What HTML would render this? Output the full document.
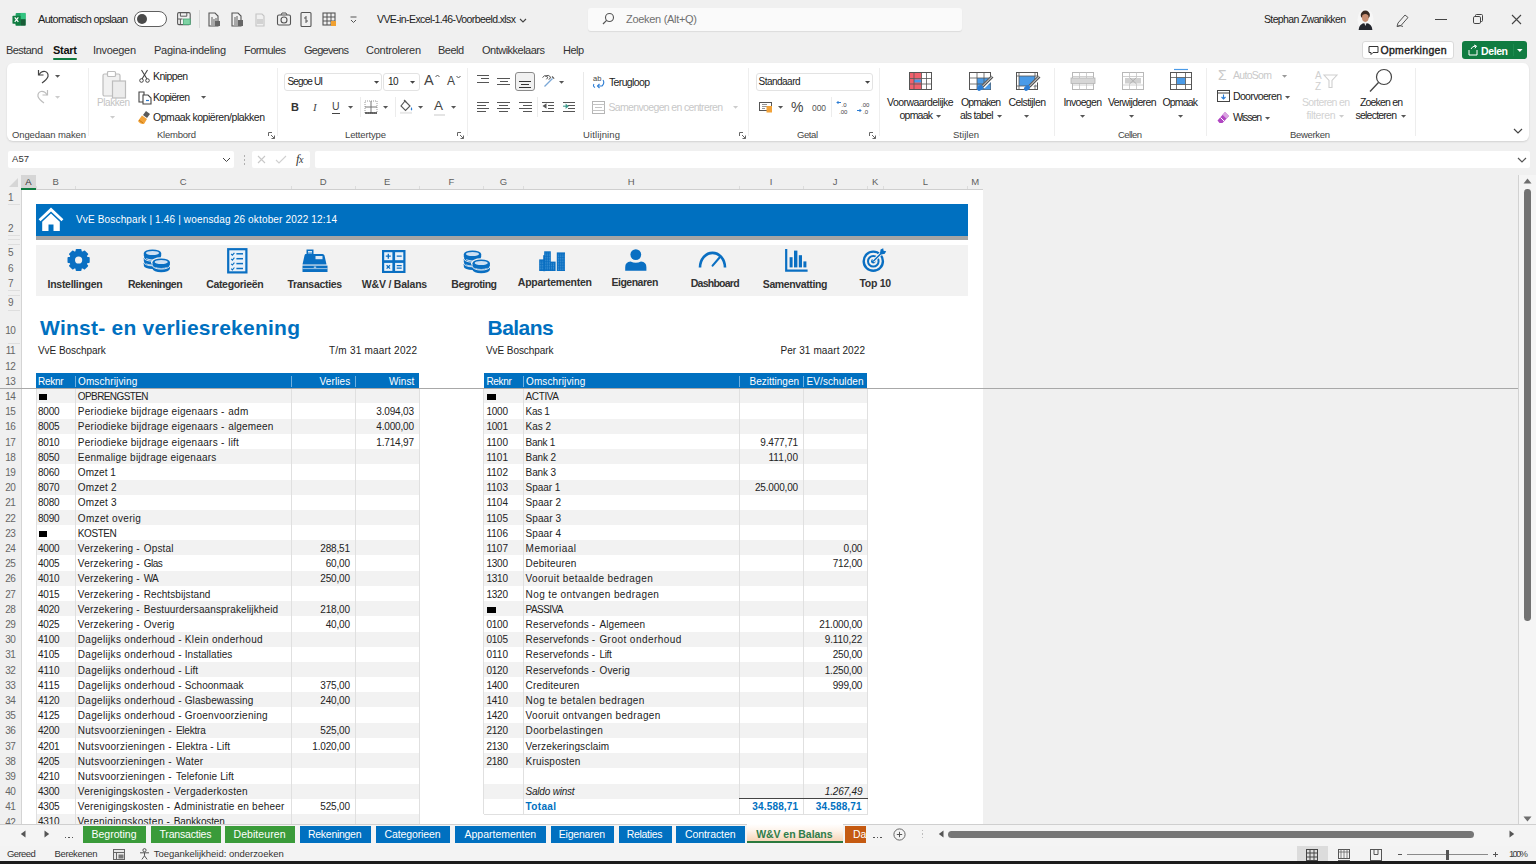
<!DOCTYPE html><html><head><meta charset="utf-8"><title>VVE-in-Excel</title><style>
*{box-sizing:border-box;margin:0;padding:0}
html,body{width:1536px;height:864px;overflow:hidden;background:#f0f0f0;font-family:"Liberation Sans",sans-serif;color:#222}
.a{position:absolute;white-space:nowrap}
.t{position:absolute;white-space:nowrap;line-height:1}
svg{position:absolute;overflow:visible}
</style></head><body>
<svg style="left:12px;top:12px;" width="14.5" height="14.5" viewBox="0 0 16 16"><rect x="4" y="1" width="11" height="14" rx="1.2" fill="#21a366"/><rect x="9.5" y="1" width="5.5" height="7" fill="#33c481"/><rect x="4" y="8" width="5.5" height="7" fill="#107c41"/><rect x="9.5" y="8" width="5.5" height="7" fill="#185c37"/><rect x="0.5" y="4" width="9" height="9" rx="1" fill="#107c41"/><path d="M3 6 L7 11 M7 6 L3 11" stroke="#fff" stroke-width="1.3"/></svg>
<div class="t" style="left:38px;top:13.56px;font-size:11px;color:#222;letter-spacing:-0.673px;">Automatisch opslaan</div>
<div class="a" style="left:133.5px;top:11px;width:33.5px;height:15.5px;border:1px solid #5f5f5f;border-radius:8px;background:#fff"></div>
<div class="a" style="left:137px;top:13.8px;width:10px;height:10px;border-radius:5px;background:#4a4a4a"></div>
<svg style="left:176.5px;top:12px;" width="14" height="13.5" viewBox="0 0 14 13.5"><rect x=".6" y=".6" width="12.6" height="12" rx="1.3" fill="none" stroke="#5a5a5a" stroke-width="1.1"/><path d="M3.4 .6 v3.6 h6.4 v-3.6" fill="none" stroke="#5a5a5a" stroke-width="1"/><path d="M.6 7 h5 M3.4 7 v5.6" stroke="#5a5a5a" stroke-width="1"/><rect x="6.4" y="7" width="6.8" height="5.6" fill="#7fd3a4" stroke="#4aa877" stroke-width=".8"/></svg>
<div class="a" style="left:199px;top:10px;width:1px;height:18px;background:#d8d8d8;"></div>
<svg style="left:206px;top:11px;" width="16" height="17" viewBox="0 0 16 17"><path d="M3 2 h6 l3 3 v10 h-9z" fill="none" stroke="#555" stroke-width="1.1"/><path d="M6 6 v8 M8 8 v6 M10 7 v7" stroke="#777" stroke-width="1.2"/><rect x="9" y="10" width="5" height="5" fill="#666"/></svg>
<svg style="left:229px;top:11px;" width="16" height="17" viewBox="0 0 16 17"><path d="M3 2 h6 l3 3 v10 h-9z" fill="none" stroke="#555" stroke-width="1.1"/><path d="M6 6 v8 M8 5 v9" stroke="#777" stroke-width="1.2"/><rect x="9" y="9" width="5" height="6" fill="#666"/></svg>
<svg style="left:252px;top:11px;" width="16" height="17" viewBox="0 0 16 17"><path d="M4 3 h6 l2 2 v10 h-8z" fill="none" stroke="#c4c4c4" stroke-width="1.1"/><rect x="5" y="8" width="6" height="5" fill="#d2d2d2"/></svg>
<svg style="left:276px;top:11px;" width="16" height="17" viewBox="0 0 16 17"><rect x="1.5" y="4" width="13" height="10" rx="1.5" fill="none" stroke="#555" stroke-width="1.1"/><circle cx="8" cy="9" r="3" fill="none" stroke="#555" stroke-width="1.1"/><path d="M5 4 l1-2 h4 l1 2" fill="none" stroke="#555" stroke-width="1"/></svg>
<svg style="left:298px;top:11px;" width="16" height="17" viewBox="0 0 16 17"><rect x="3" y="1.5" width="10" height="14" rx="1" fill="none" stroke="#555" stroke-width="1.1"/><path d="M8 5 v7 M6 7 h2 M8 10 h2" stroke="#555" stroke-width="1"/></svg>
<svg style="left:321px;top:11px;" width="16" height="17" viewBox="0 0 16 17"><rect x="2" y="2" width="12" height="12" fill="none" stroke="#555" stroke-width="1.1"/><path d="M2 6 h12 M2 10 h12 M6 2 v12 M10 2 v12" stroke="#555" stroke-width="1"/><rect x="10" y="10" width="5" height="5" fill="#f0a030"/></svg>
<svg style="left:349px;top:15px;" width="9" height="9" viewBox="0 0 9 9"><path d="M1.5 2 h6" stroke="#555" stroke-width="1"/><path d="M2 5 l2.5 2.5 l2.5-2.5" fill="none" stroke="#555" stroke-width="1"/></svg>
<div class="t" style="left:377px;top:13.83px;font-size:10.5px;color:#222;letter-spacing:-0.599px;">VVE-in-Excel-1.46-Voorbeeld.xlsx</div>
<svg style="left:519.0px;top:17.5px;" width="8" height="5" viewBox="0 0 8 5"><path d="M1 1 L4.0 4 L7 1" fill="none" stroke="#444" stroke-width="1.1"/></svg>
<div class="a" style="left:588px;top:7.5px;width:374px;height:23.3px;background:#fafafa;border-radius:3px;box-shadow:0 1px 1px #dcdcdc"></div>
<svg style="left:602px;top:12px;" width="13" height="13" viewBox="0 0 13 13"><circle cx="7.5" cy="5.5" r="4" fill="none" stroke="#555" stroke-width="1.1"/><path d="M4.6 8.4 L1 12" stroke="#555" stroke-width="1.2"/></svg>
<div class="t" style="left:626px;top:13.76px;font-size:11px;color:#707070;letter-spacing:-0.300px;">Zoeken (Alt+Q)</div>
<div class="t" style="left:1264px;top:13.83px;font-size:10.5px;color:#222;letter-spacing:-0.639px;">Stephan Zwanikken</div>
<svg style="left:1357px;top:8.5px;" width="17" height="21" viewBox="0 0 17 21"><ellipse cx="8.5" cy="10.5" rx="8" ry="10.5" fill="#f7f7f7"/><ellipse cx="8.3" cy="6" rx="4.6" ry="4.4" fill="#3a2a22"/><ellipse cx="8.3" cy="8.6" rx="3.3" ry="4.3" fill="#c98f72"/><path d="M5.4 6.2 q3-2.4 5.8 0 v-1.6 q-3-2-5.8 0z" fill="#3a2a22"/><path d="M1.6 21 q.4-6.6 6.9-7 q6.5 .4 6.9 7z" fill="#23262e"/><path d="M7 13.6 l1.4 3.4 l1.4-3.4z" fill="#e9e9e9"/></svg>
<svg style="left:1394px;top:11px;" width="17" height="17" viewBox="0 0 17 17"><path d="M4 12 l7-8 l3 2.5 l-7 8 l-4 1z" fill="none" stroke="#555" stroke-width="1"/><path d="M3 15.5 q3-2 6 0" fill="none" stroke="#555" stroke-width="1"/></svg>
<div class="a" style="left:1434.5px;top:18.6px;width:12px;height:1px;background:#444;"></div>
<svg style="left:1472px;top:13px;" width="12" height="12" viewBox="0 0 12 12"><rect x="1.5" y="3.5" width="7" height="7" rx="1.3" fill="none" stroke="#444" stroke-width="1"/><path d="M3.5 3.5 v-1 q0-1 1-1 h5 q1 0 1 1 v5 q0 1-1 1 h-1" fill="none" stroke="#444" stroke-width="1"/></svg>
<svg style="left:1511px;top:14px;" width="11" height="11" viewBox="0 0 11 11"><path d="M1 1 L10 10 M10 1 L1 10" stroke="#444" stroke-width="1.1"/></svg>
<div class="t" style="left:6px;top:45.26px;font-size:11px;color:#333;letter-spacing:-0.561px;">Bestand</div>
<div class="t" style="left:93px;top:45.26px;font-size:11px;color:#333;letter-spacing:-0.324px;">Invoegen</div>
<div class="t" style="left:154px;top:45.26px;font-size:11px;color:#333;letter-spacing:-0.274px;">Pagina-indeling</div>
<div class="t" style="left:244px;top:45.26px;font-size:11px;color:#333;letter-spacing:-0.549px;">Formules</div>
<div class="t" style="left:304px;top:45.26px;font-size:11px;color:#333;letter-spacing:-0.735px;">Gegevens</div>
<div class="t" style="left:366px;top:45.26px;font-size:11px;color:#333;letter-spacing:-0.248px;">Controleren</div>
<div class="t" style="left:438px;top:45.26px;font-size:11px;color:#333;letter-spacing:-0.534px;">Beeld</div>
<div class="t" style="left:482px;top:45.26px;font-size:11px;color:#333;letter-spacing:-0.507px;">Ontwikkelaars</div>
<div class="t" style="left:563px;top:45.26px;font-size:11px;color:#333;letter-spacing:-0.542px;">Help</div>
<div class="t" style="left:53px;top:45.26px;font-size:11px;color:#111;letter-spacing:-0.266px;font-weight:bold;">Start</div>
<div class="a" style="left:53px;top:57.5px;width:24px;height:2px;background:#107c41;border-radius:1px"></div>
<div class="a" style="left:1362.4px;top:40.6px;width:91.4px;height:18.6px;background:#fff;border:1px solid #dadada;border-radius:3px"></div>
<svg style="left:1368px;top:45px;" width="11" height="11" viewBox="0 0 11 11"><path d="M1 1.5 h9 v6 h-5 l-2 2 v-2 h-2z" fill="none" stroke="#333" stroke-width="1"/></svg>
<div class="t" style="left:1380.5px;top:45.33px;font-size:10.5px;color:#222;letter-spacing:0.297px;-webkit-text-stroke:.4px #222;">Opmerkingen</div>
<div class="a" style="left:1462px;top:40.6px;width:64.6px;height:18.8px;background:#107c41;border-radius:3px"></div>
<svg style="left:1468px;top:45px;" width="11" height="11" viewBox="0 0 11 11"><path d="M1 5 v5 h8 v-5" fill="none" stroke="#fff" stroke-width="1"/><path d="M3 4 q1-3 5-3 M6 0 l2.5 1 l-1.5 2.3" fill="none" stroke="#fff" stroke-width="1"/></svg>
<div class="t" style="left:1481px;top:45.53px;font-size:10.5px;color:#fff;letter-spacing:-0.398px;font-weight:bold;">Delen</div>
<div class="a" style="left:1513px;top:44px;width:1px;height:12px;background:#1c8a4e;"></div>
<svg style="left:1517.2px;top:49.45px;" width="5.6" height="3.1" viewBox="0 0 5.6 3.1"><path d="M0 0 h5.6 L2.8 3.1z" fill="#fff"/></svg>
<div class="a" style="left:7px;top:62.6px;width:1521.5px;height:78.4px;background:#fff;border-radius:6px;box-shadow:0 1px 2px rgba(0,0,0,.13)"></div>
<div class="a" style="left:88px;top:68px;width:1px;height:68px;background:#eeeeee;"></div>
<div class="a" style="left:277px;top:68px;width:1px;height:68px;background:#eeeeee;"></div>
<div class="a" style="left:467px;top:68px;width:1px;height:68px;background:#eeeeee;"></div>
<div class="a" style="left:748px;top:68px;width:1px;height:68px;background:#eeeeee;"></div>
<div class="a" style="left:879px;top:68px;width:1px;height:68px;background:#eeeeee;"></div>
<div class="a" style="left:1054px;top:68px;width:1px;height:68px;background:#eeeeee;"></div>
<div class="a" style="left:1206px;top:68px;width:1px;height:68px;background:#eeeeee;"></div>
<div class="t" style="left:12px;top:129.97px;font-size:9.5px;color:#444;letter-spacing:-0.117px;">Ongedaan maken</div>
<div class="t" style="left:157px;top:129.97px;font-size:9.5px;color:#444;letter-spacing:-0.237px;">Klembord</div>
<div class="t" style="left:345px;top:129.97px;font-size:9.5px;color:#444;letter-spacing:-0.139px;">Lettertype</div>
<div class="t" style="left:583px;top:129.97px;font-size:9.5px;color:#444;letter-spacing:0.122px;">Uitlijning</div>
<div class="t" style="left:797px;top:129.97px;font-size:9.5px;color:#444;letter-spacing:-0.427px;">Getal</div>
<div class="t" style="left:953px;top:129.97px;font-size:9.5px;color:#444;letter-spacing:0.021px;">Stijlen</div>
<div class="t" style="left:1118px;top:129.97px;font-size:9.5px;color:#444;letter-spacing:-0.586px;">Cellen</div>
<div class="t" style="left:1290px;top:129.97px;font-size:9.5px;color:#444;letter-spacing:-0.321px;">Bewerken</div>
<svg style="left:268px;top:132.1px;" width="7" height="7" viewBox="0 0 7 7"><path d="M0.5 4 v-3.5 h3.5" fill="none" stroke="#666" stroke-width="1"/><path d="M3 3 l3.5 3.5 M6.5 3.5 v3 h-3" fill="none" stroke="#666" stroke-width="1"/></svg>
<svg style="left:457px;top:132.1px;" width="7" height="7" viewBox="0 0 7 7"><path d="M0.5 4 v-3.5 h3.5" fill="none" stroke="#666" stroke-width="1"/><path d="M3 3 l3.5 3.5 M6.5 3.5 v3 h-3" fill="none" stroke="#666" stroke-width="1"/></svg>
<svg style="left:739px;top:132.1px;" width="7" height="7" viewBox="0 0 7 7"><path d="M0.5 4 v-3.5 h3.5" fill="none" stroke="#666" stroke-width="1"/><path d="M3 3 l3.5 3.5 M6.5 3.5 v3 h-3" fill="none" stroke="#666" stroke-width="1"/></svg>
<svg style="left:869px;top:132.1px;" width="7" height="7" viewBox="0 0 7 7"><path d="M0.5 4 v-3.5 h3.5" fill="none" stroke="#666" stroke-width="1"/><path d="M3 3 l3.5 3.5 M6.5 3.5 v3 h-3" fill="none" stroke="#666" stroke-width="1"/></svg>
<svg style="left:1513px;top:128px;" width="10" height="7" viewBox="0 0 10 7"><path d="M1 1 l4 4 l4-4" fill="none" stroke="#444" stroke-width="1.2"/></svg>
<svg style="left:35px;top:68px;" width="16" height="16" viewBox="0 0 16 16"><path d="M3.5 2 v5 h5" fill="none" stroke="#444" stroke-width="1.2"/><path d="M4 7 q2-4 6-3.5 q3.5 1 3 5 q-1 3-6 6.5" fill="none" stroke="#444" stroke-width="1.2"/></svg>
<svg style="left:54.95px;top:74.6px;" width="5.1" height="2.8000000000000003" viewBox="0 0 5.1 2.8000000000000003"><path d="M0 0 h5.1 L2.55 2.8000000000000003z" fill="#555"/></svg>
<svg style="left:35px;top:88px;" width="16" height="16" viewBox="0 0 16 16"><path d="M12.5 2 v5 h-5" fill="none" stroke="#bdbdbd" stroke-width="1.2"/><path d="M12 7 q-2-4-6-3.5 q-3.5 1-3 5 q1 3 6 6.5" fill="none" stroke="#bdbdbd" stroke-width="1.2"/></svg>
<svg style="left:54.95px;top:95.6px;" width="5.1" height="2.8000000000000003" viewBox="0 0 5.1 2.8000000000000003"><path d="M0 0 h5.1 L2.55 2.8000000000000003z" fill="#ccc"/></svg>
<svg style="left:101px;top:70px;" width="26" height="30" viewBox="0 0 26 30"><rect x="2" y="4" width="17" height="22" rx="1.5" fill="#f1f1f1" stroke="#bdbdbd" stroke-width="1.2"/><rect x="6.5" y="1.5" width="8" height="5" rx="1" fill="#fff" stroke="#bdbdbd" stroke-width="1.2"/><rect x="11.5" y="11" width="13" height="17" fill="#ececec" stroke="#bdbdbd" stroke-width="1.2"/></svg>
<div class="t" style="left:97px;top:98.10px;font-size:10px;color:#c4c4c4;letter-spacing:-0.429px;">Plakken</div>
<svg style="left:110.45px;top:115.6px;" width="5.1" height="2.8000000000000003" viewBox="0 0 5.1 2.8000000000000003"><path d="M0 0 h5.1 L2.55 2.8000000000000003z" fill="#ccc"/></svg>
<svg style="left:138px;top:69px;" width="13" height="14" viewBox="0 0 13 14"><path d="M3.5 1 L9 10 M9.5 1 L4 10" stroke="#444" stroke-width="1.1"/><circle cx="3.5" cy="11.5" r="1.8" fill="none" stroke="#444" stroke-width="1"/><circle cx="9.5" cy="11.5" r="1.8" fill="none" stroke="#444" stroke-width="1"/></svg>
<div class="t" style="left:153px;top:70.83px;font-size:10.5px;color:#222;letter-spacing:-0.589px;">Knippen</div>
<svg style="left:137px;top:90px;" width="15" height="15" viewBox="0 0 15 15"><path d="M2 2 h5 v10 h-5z" fill="#fff" stroke="#444" stroke-width="1.1"/><path d="M6 5 h5 l3 3 v6 h-8z" fill="#fff" stroke="#444" stroke-width="1.1"/><path d="M9 10.5 h3" stroke="#2b7cd3" stroke-width="1.2"/></svg>
<div class="t" style="left:153px;top:91.83px;font-size:10.5px;color:#222;letter-spacing:-0.719px;">Kopiëren</div>
<svg style="left:200.95px;top:96.1px;" width="5.1" height="2.8000000000000003" viewBox="0 0 5.1 2.8000000000000003"><path d="M0 0 h5.1 L2.55 2.8000000000000003z" fill="#555"/></svg>
<svg style="left:137px;top:110px;" width="15" height="15" viewBox="0 0 15 15"><path d="M9 1 l4 3 l-3 4 l-4-3z" fill="#5a5a5a"/><path d="M5 5.5 l5 3.5 l-3 5 q-4 .5-6-3 z" fill="#f2a33a"/><path d="M2 10 l4 3" stroke="#c77a10" stroke-width="1"/></svg>
<div class="t" style="left:153px;top:111.83px;font-size:10.5px;color:#222;letter-spacing:-0.454px;">Opmaak kopiëren/plakken</div>
<div class="a" style="left:284px;top:72.5px;width:98px;height:18px;background:#fff;border:1px solid #e3e3e3;border-radius:3px"></div>
<div class="a" style="left:383px;top:72.5px;width:36.5px;height:18px;background:#fff;border:1px solid #e3e3e3;border-radius:3px"></div>
<div class="t" style="left:287.5px;top:76.80px;font-size:10px;color:#222;letter-spacing:-0.885px;">Segoe UI</div>
<svg style="left:374.45px;top:80.6px;" width="5.1" height="2.8000000000000003" viewBox="0 0 5.1 2.8000000000000003"><path d="M0 0 h5.1 L2.55 2.8000000000000003z" fill="#444"/></svg>
<div class="t" style="left:388px;top:76.80px;font-size:10px;color:#222;letter-spacing:-0.623px;">10</div>
<svg style="left:410.45px;top:80.6px;" width="5.1" height="2.8000000000000003" viewBox="0 0 5.1 2.8000000000000003"><path d="M0 0 h5.1 L2.55 2.8000000000000003z" fill="#444"/></svg>
<div class="t" style="left:424px;top:72.67px;font-size:14.5px;color:#444;letter-spacing:0.828px;">A</div>
<svg style="left:435px;top:74px;" width="5" height="4" viewBox="0 0 5 4"><path d="M.5 3 l2-2 l2 2" fill="none" stroke="#444" stroke-width=".9"/></svg>
<div class="t" style="left:447px;top:74.52px;font-size:12px;color:#444;letter-spacing:0.496px;">A</div>
<svg style="left:456px;top:74.5px;" width="5" height="4" viewBox="0 0 5 4"><path d="M.5 1 l2 2 l2-2" fill="none" stroke="#444" stroke-width=".9"/></svg>
<div class="t" style="left:291px;top:101.66px;font-size:11px;color:#333;letter-spacing:-0.944px;font-weight:bold;">B</div>
<div class="t" style="left:313px;top:101.66px;font-size:11px;color:#444;letter-spacing:0.443px;font-style:italic;font-family:'Liberation Serif',serif;">I</div>
<div class="t" style="left:332px;top:101.43px;font-size:10.5px;color:#444;letter-spacing:-0.583px;">U</div>
<div class="a" style="left:331.5px;top:112.5px;width:8px;height:1px;background:#444;"></div>
<svg style="left:347.95px;top:106.1px;" width="5.1" height="2.8000000000000003" viewBox="0 0 5.1 2.8000000000000003"><path d="M0 0 h5.1 L2.55 2.8000000000000003z" fill="#555"/></svg>
<div class="a" style="left:359.5px;top:97px;width:1px;height:20px;background:#ececec;"></div>
<svg style="left:364px;top:100px;" width="14" height="14" viewBox="0 0 14 14"><rect x="1" y="1" width="12" height="12" fill="none" stroke="#9a9a9a" stroke-width="1" stroke-dasharray="1 1"/><path d="M7 1 v12 M1 7 h12" stroke="#777" stroke-width="1"/><path d="M1 13 h12" stroke="#333" stroke-width="1.4"/></svg>
<svg style="left:383.45px;top:106.1px;" width="5.1" height="2.8000000000000003" viewBox="0 0 5.1 2.8000000000000003"><path d="M0 0 h5.1 L2.55 2.8000000000000003z" fill="#555"/></svg>
<div class="a" style="left:394.5px;top:97px;width:1px;height:20px;background:#ececec;"></div>
<svg style="left:399px;top:99px;" width="15" height="15" viewBox="0 0 15 15"><path d="M6 2 l5 5 l-4.5 4.5 l-4.5-4.5z" fill="none" stroke="#555" stroke-width="1.1"/><path d="M5 1 l2 2" stroke="#555" stroke-width="1.1"/><path d="M12.5 8 q1.5 2.5 0 3.5 q-1.5-1 0-3.5z" fill="#2b7cd3"/><rect x="1" y="12.8" width="12" height="2" fill="#e8e8e8"/></svg>
<svg style="left:418.45px;top:106.1px;" width="5.1" height="2.8000000000000003" viewBox="0 0 5.1 2.8000000000000003"><path d="M0 0 h5.1 L2.55 2.8000000000000003z" fill="#555"/></svg>
<div class="t" style="left:434px;top:98.81px;font-size:13.5px;color:#444;letter-spacing:1.495px;">A</div>
<div class="a" style="left:434px;top:113.5px;width:11px;height:2px;background:#e4e4e4;"></div>
<svg style="left:451.45px;top:106.1px;" width="5.1" height="2.8000000000000003" viewBox="0 0 5.1 2.8000000000000003"><path d="M0 0 h5.1 L2.55 2.8000000000000003z" fill="#555"/></svg>
<div class="a" style="left:476.5px;top:75px;width:12px;height:1px;background:#555;"></div>
<div class="a" style="left:480.5px;top:78.3px;width:8px;height:1px;background:#555;"></div>
<div class="a" style="left:476.5px;top:81.6px;width:12px;height:1px;background:#555;"></div>
<div class="a" style="left:497.0px;top:77.5px;width:13px;height:1px;background:#555;"></div>
<div class="a" style="left:499.5px;top:80.8px;width:8px;height:1px;background:#555;"></div>
<div class="a" style="left:497.0px;top:84.1px;width:13px;height:1px;background:#555;"></div>
<div class="a" style="left:515.2px;top:72.2px;width:19.6px;height:19px;background:#f1f1f1;border:1px solid #8a8a8a;border-radius:3px"></div>
<div class="a" style="left:519.0px;top:81px;width:12px;height:1px;background:#333;"></div>
<div class="a" style="left:521.0px;top:84.2px;width:8px;height:1px;background:#333;"></div>
<div class="a" style="left:519.0px;top:87.4px;width:12px;height:1px;background:#333;"></div>
<svg style="left:541px;top:74px;" width="15" height="14" viewBox="0 0 15 14"><path d="M3.5 12.5 L11.5 4.5" stroke="#7aa7d6" stroke-width="1.2"/><path d="M1.5 3.5 q2-3 4.5-1.2 q1.5 1.6-.6 3 M4.2 2.2 q3.4-2 5.2.6 q.6 1.8-1.8 2.6" fill="none" stroke="#555" stroke-width="1"/><path d="M11 2.5 l2.2 2.2" stroke="#555" stroke-width="1.1"/></svg>
<svg style="left:558.95px;top:80.6px;" width="5.1" height="2.8000000000000003" viewBox="0 0 5.1 2.8000000000000003"><path d="M0 0 h5.1 L2.55 2.8000000000000003z" fill="#555"/></svg>
<div class="a" style="left:476.5px;top:101.6px;width:12px;height:1px;background:#555;"></div>
<div class="a" style="left:476.5px;top:104.8px;width:9px;height:1px;background:#555;"></div>
<div class="a" style="left:476.5px;top:108px;width:12px;height:1px;background:#555;"></div>
<div class="a" style="left:476.5px;top:111.2px;width:9px;height:1px;background:#555;"></div>
<div class="a" style="left:497.0px;top:101.6px;width:13px;height:1px;background:#555;"></div>
<div class="a" style="left:499.0px;top:104.8px;width:9px;height:1px;background:#555;"></div>
<div class="a" style="left:497.0px;top:108px;width:13px;height:1px;background:#555;"></div>
<div class="a" style="left:499.0px;top:111.2px;width:9px;height:1px;background:#555;"></div>
<div class="a" style="left:518.5px;top:101.6px;width:13px;height:1px;background:#555;"></div>
<div class="a" style="left:522.5px;top:104.8px;width:9px;height:1px;background:#555;"></div>
<div class="a" style="left:518.5px;top:108px;width:13px;height:1px;background:#555;"></div>
<div class="a" style="left:522.5px;top:111.2px;width:9px;height:1px;background:#555;"></div>
<div class="a" style="left:536.5px;top:97px;width:1px;height:20px;background:#ececec;"></div>
<div class="a" style="left:542px;top:101.6px;width:12px;height:1px;background:#555;"></div>
<div class="a" style="left:542px;top:111.2px;width:12px;height:1px;background:#555;"></div>
<div class="a" style="left:547.5px;top:104.8px;width:6.5px;height:1px;background:#555;"></div>
<div class="a" style="left:547.5px;top:108px;width:6.5px;height:1px;background:#555;"></div>
<svg style="left:542px;top:103.4px;" width="5" height="6" viewBox="0 0 5 6"><path d="M4.5 0.3 L0.5 3 L4.5 5.7z" fill="#555"/></svg>
<div class="a" style="left:562.7px;top:101.6px;width:12px;height:1px;background:#555;"></div>
<div class="a" style="left:562.7px;top:111.2px;width:12px;height:1px;background:#555;"></div>
<div class="a" style="left:568.2px;top:104.8px;width:6.5px;height:1px;background:#555;"></div>
<div class="a" style="left:568.2px;top:108px;width:6.5px;height:1px;background:#555;"></div>
<svg style="left:562.5px;top:103.2px;" width="6" height="6.4" viewBox="0 0 6 6.4"><path d="M0 3.2 h3" stroke="#3f9a8c" stroke-width="1.1"/><path d="M2.6 0.4 L5.8 3.2 L2.6 6z" fill="#3f9a8c"/></svg>
<div class="a" style="left:583.3px;top:72px;width:1px;height:48px;background:#e9e9e9;"></div>
<svg style="left:592px;top:74px;" width="13" height="15" viewBox="0 0 13 15"><text x="1" y="7" font-size="7.5" fill="#444" font-family="Liberation Sans">ab</text><path d="M2 10 q-1.5 2 1 3.5 M11 6 q2 3-1 6 h-4" fill="none" stroke="#2b7cd3" stroke-width="1.1"/><path d="M7.5 10 l-2 2 l2 2" fill="none" stroke="#2b7cd3" stroke-width="1.1"/></svg>
<div class="t" style="left:609px;top:76.93px;font-size:10.5px;color:#222;letter-spacing:-0.640px;">Terugloop</div>
<svg style="left:591.5px;top:100.5px;" width="13" height="13" viewBox="0 0 13 13"><rect x=".5" y=".5" width="12" height="12" fill="none" stroke="#b5b5b5" stroke-width="1"/><path d="M.5 3.5 h12 M.5 9.5 h12" stroke="#c4c4c4" stroke-width="1"/><path d="M3 6.5 h7" stroke="#c4c4c4" stroke-width="1"/></svg>
<div class="t" style="left:608.5px;top:102.43px;font-size:10.5px;color:#c8c8c8;letter-spacing:-0.656px;">Samenvoegen en centreren</div>
<svg style="left:732.95px;top:106.1px;" width="5.1" height="2.8000000000000003" viewBox="0 0 5.1 2.8000000000000003"><path d="M0 0 h5.1 L2.55 2.8000000000000003z" fill="#ccc"/></svg>
<div class="a" style="left:755.5px;top:72.5px;width:117.5px;height:18px;background:#fff;border:1px solid #e3e3e3;border-radius:3px"></div>
<div class="t" style="left:758.5px;top:76.80px;font-size:10px;color:#222;letter-spacing:-0.518px;">Standaard</div>
<svg style="left:864.95px;top:80.6px;" width="5.1" height="2.8000000000000003" viewBox="0 0 5.1 2.8000000000000003"><path d="M0 0 h5.1 L2.55 2.8000000000000003z" fill="#444"/></svg>
<svg style="left:759px;top:101px;" width="13" height="12" viewBox="0 0 13 12"><rect x=".5" y="1.5" width="12" height="8" fill="#fff" stroke="#555" stroke-width="1"/><path d="M3 3.5 h5 M3 5.5 h5 M3 7.5 h3" stroke="#777" stroke-width=".8"/><rect x="7.5" y="5" width="5.5" height="6.5" fill="#f2a33a"/></svg>
<svg style="left:778.45px;top:106.1px;" width="5.1" height="2.8000000000000003" viewBox="0 0 5.1 2.8000000000000003"><path d="M0 0 h5.1 L2.55 2.8000000000000003z" fill="#555"/></svg>
<div class="t" style="left:791px;top:99.54px;font-size:14px;color:#444;letter-spacing:1.552px;">%</div>
<div class="t" style="left:812px;top:103.51px;font-size:8.5px;color:#555;letter-spacing:-0.091px;">000</div>
<div class="a" style="left:831px;top:97px;width:1px;height:20px;background:#ececec;"></div>
<svg style="left:836px;top:100px;" width="14" height="14" viewBox="0 0 14 14"><path d="M5 2.5 h-4 M2.5 1 l-1.5 1.5 l1.5 1.5" fill="none" stroke="#2b7cd3" stroke-width="1"/><text x="5.5" y="6.5" font-size="6" fill="#444" font-family="Liberation Sans">.0</text><text x="3" y="13.5" font-size="6" fill="#444" font-family="Liberation Sans">.00</text></svg>
<svg style="left:856px;top:100px;" width="14" height="14" viewBox="0 0 14 14"><text x="5" y="6.5" font-size="6" fill="#444" font-family="Liberation Sans">.00</text><path d="M1 10.5 h4 M3.5 9 l1.5 1.5 l-1.5 1.5" fill="none" stroke="#2b7cd3" stroke-width="1"/><text x="7" y="13.5" font-size="6" fill="#444" font-family="Liberation Sans">.0</text></svg>
<svg style="left:909px;top:72px;" width="23" height="18" viewBox="0 0 23 18"><rect x=".5" y=".5" width="22" height="17" fill="#fff" stroke="#555" stroke-width="1"/><rect x="5" y="1" width="7.5" height="5.5" fill="#f0616d"/><rect x="5" y="12" width="7.5" height="5" fill="#f0616d"/><rect x="1" y="6.5" width="11.5" height="5.5" fill="#f0616d"/><rect x="1" y="1" width="4" height="16" fill="#f0616d"/><rect x="5" y="7.5" width="7.5" height="3" fill="#4a9be8"/><path d="M5 .5 v17 M12.5 .5 v17 M17.5 .5 v17 M.5 6.5 h22 M.5 12 h22" stroke="#555" stroke-width=".8"/></svg>
<div class="t" style="left:887px;top:96.83px;font-size:10.5px;color:#222;letter-spacing:-0.545px;">Voorwaardelijke</div>
<div class="t" style="left:899.5px;top:109.53px;font-size:10.5px;color:#222;letter-spacing:-0.771px;">opmaak</div>
<svg style="left:936.45px;top:114.6px;" width="5.1" height="2.8000000000000003" viewBox="0 0 5.1 2.8000000000000003"><path d="M0 0 h5.1 L2.55 2.8000000000000003z" fill="#555"/></svg>
<svg style="left:969px;top:72px;" width="25" height="19" viewBox="0 0 25 19"><rect x=".5" y=".5" width="21" height="17" fill="#fff" stroke="#555" stroke-width="1"/><rect x="8" y="6" width="13.5" height="11.5" fill="#4a9be8"/><path d="M8 .5 v17 M15 .5 v17 M.5 6 h21 M.5 12 h21" stroke="#555" stroke-width=".8"/><path d="M24 5 L14 15" stroke="#fff" stroke-width="4"/><path d="M24 5 L14 15" stroke="#555" stroke-width="1.2"/><path d="M22.5 3.8 L12.5 13.8" stroke="#555" stroke-width="1.2"/><ellipse cx="11" cy="16" rx="3.3" ry="2.4" fill="#2b7cd3" transform="rotate(-40 11 16)"/></svg>
<div class="t" style="left:961px;top:96.83px;font-size:10.5px;color:#222;letter-spacing:-0.921px;">Opmaken</div>
<div class="t" style="left:960px;top:109.53px;font-size:10.5px;color:#222;letter-spacing:-0.701px;">als tabel</div>
<svg style="left:996.95px;top:114.6px;" width="5.1" height="2.8000000000000003" viewBox="0 0 5.1 2.8000000000000003"><path d="M0 0 h5.1 L2.55 2.8000000000000003z" fill="#555"/></svg>
<svg style="left:1015.5px;top:72px;" width="25" height="19" viewBox="0 0 25 19"><rect x=".5" y=".5" width="21" height="17" fill="#fff" stroke="#555" stroke-width="1"/><rect x="3" y="4" width="16" height="10" fill="#4a9be8"/><path d="M3 .5 v17 M19 .5 v17 M.5 4 h21 M.5 14 h21" stroke="#555" stroke-width=".8"/><path d="M24 5 L14 15" stroke="#fff" stroke-width="4"/><path d="M24 5 L14 15" stroke="#555" stroke-width="1.2"/><path d="M22.5 3.8 L12.5 13.8" stroke="#555" stroke-width="1.2"/><ellipse cx="11" cy="16" rx="3.3" ry="2.4" fill="#2b7cd3" transform="rotate(-40 11 16)"/></svg>
<div class="t" style="left:1008.5px;top:96.83px;font-size:10.5px;color:#222;letter-spacing:-0.567px;">Celstijlen</div>
<svg style="left:1024.45px;top:114.6px;" width="5.1" height="2.8000000000000003" viewBox="0 0 5.1 2.8000000000000003"><path d="M0 0 h5.1 L2.55 2.8000000000000003z" fill="#555"/></svg>
<svg style="left:1071px;top:72px;" width="24" height="18" viewBox="0 0 24 18"><rect x="1.5" y=".5" width="21" height="17" fill="#fff" stroke="#b8b8b8" stroke-width="1"/><path d="M8.5 .5 v17 M15.5 .5 v17 M1.5 4.5 h21 M1.5 13 h21" stroke="#c4c4c4" stroke-width=".8"/><rect x="0" y="6" width="24" height="5.5" fill="#d6d6d6" stroke="#b5b5b5" stroke-width=".8"/></svg>
<div class="t" style="left:1063.5px;top:97.33px;font-size:10.5px;color:#222;letter-spacing:-0.672px;">Invoegen</div>
<svg style="left:1079.95px;top:114.6px;" width="5.1" height="2.8000000000000003" viewBox="0 0 5.1 2.8000000000000003"><path d="M0 0 h5.1 L2.55 2.8000000000000003z" fill="#555"/></svg>
<svg style="left:1120.5px;top:72px;" width="24" height="18" viewBox="0 0 24 18"><rect x="1.5" y=".5" width="21" height="17" fill="#fff" stroke="#b8b8b8" stroke-width="1"/><path d="M8.5 .5 v17 M15.5 .5 v17 M1.5 4.5 h21 M1.5 13 h21" stroke="#c4c4c4" stroke-width=".8"/><rect x="4" y="6" width="16" height="5.5" fill="#d0d0d0"/><path d="M9 6 l6 5.5 M15 6 l-6 5.5" stroke="#b0b0b0" stroke-width="1"/></svg>
<div class="t" style="left:1108px;top:97.33px;font-size:10.5px;color:#222;letter-spacing:-0.637px;">Verwijderen</div>
<svg style="left:1129.45px;top:114.6px;" width="5.1" height="2.8000000000000003" viewBox="0 0 5.1 2.8000000000000003"><path d="M0 0 h5.1 L2.55 2.8000000000000003z" fill="#555"/></svg>
<svg style="left:1169px;top:68px;" width="24" height="22" viewBox="0 0 24 22"><path d="M5 1.5 h14" stroke="#4a9be8" stroke-width="1.2"/><rect x="1.5" y="4.5" width="21" height="17" fill="#fff" stroke="#555" stroke-width="1"/><rect x="7.5" y="9.5" width="9" height="7" fill="#4a9be8"/><path d="M7.5 4.5 v17 M16.5 4.5 v17 M1.5 9.5 h21 M1.5 16.5 h21" stroke="#555" stroke-width=".8"/></svg>
<div class="t" style="left:1162.5px;top:96.83px;font-size:10.5px;color:#222;letter-spacing:-0.837px;">Opmaak</div>
<svg style="left:1177.95px;top:114.6px;" width="5.1" height="2.8000000000000003" viewBox="0 0 5.1 2.8000000000000003"><path d="M0 0 h5.1 L2.55 2.8000000000000003z" fill="#555"/></svg>
<div class="t" style="left:1218px;top:67.94px;font-size:14px;color:#c9c9c9;letter-spacing:0.346px;">Σ</div>
<div class="t" style="left:1233px;top:69.83px;font-size:10.5px;color:#c9c9c9;letter-spacing:-0.699px;">AutoSom</div>
<svg style="left:1282.45px;top:74.6px;" width="5.1" height="2.8000000000000003" viewBox="0 0 5.1 2.8000000000000003"><path d="M0 0 h5.1 L2.55 2.8000000000000003z" fill="#999"/></svg>
<svg style="left:1217px;top:90px;" width="13" height="12" viewBox="0 0 13 12"><rect x=".5" y=".5" width="12" height="11" fill="#fff" stroke="#444" stroke-width="1"/><path d="M.5 3 h12" stroke="#444" stroke-width="1"/><path d="M6.5 4.5 v4.5 M4.5 7 l2 2 l2-2" fill="none" stroke="#2b7cd3" stroke-width="1.1"/></svg>
<div class="t" style="left:1233px;top:90.83px;font-size:10.5px;color:#222;letter-spacing:-0.652px;">Doorvoeren</div>
<svg style="left:1285.45px;top:95.6px;" width="5.1" height="2.8000000000000003" viewBox="0 0 5.1 2.8000000000000003"><path d="M0 0 h5.1 L2.55 2.8000000000000003z" fill="#555"/></svg>
<svg style="left:1217px;top:111px;" width="13" height="13" viewBox="0 0 13 13"><path d="M8 1 l4 4 l-6.5 7 h-3 l-2-2.5z" fill="#b146c2"/><path d="M3.5 6.5 l4 4" stroke="#fff" stroke-width="1"/><path d="M8 1 l4 4 l-2.5 2.8 l-4-4z" fill="#d9a3e0"/></svg>
<div class="t" style="left:1233px;top:112.33px;font-size:10.5px;color:#222;letter-spacing:-1.085px;">Wissen</div>
<svg style="left:1265.45px;top:117.1px;" width="5.1" height="2.8000000000000003" viewBox="0 0 5.1 2.8000000000000003"><path d="M0 0 h5.1 L2.55 2.8000000000000003z" fill="#555"/></svg>
<svg style="left:1314px;top:70px;" width="24" height="22" viewBox="0 0 24 22"><text x="1" y="9" font-size="10" fill="#cfcfcf" font-family="Liberation Sans">A</text><text x="1" y="20" font-size="10" fill="#cfcfcf" font-family="Liberation Sans">Z</text><path d="M10 5 h13 l-5 5.5 v7 h-3 v-7z" fill="none" stroke="#cfcfcf" stroke-width="1.1"/></svg>
<div class="t" style="left:1302px;top:96.83px;font-size:10.5px;color:#d2d2d2;letter-spacing:-0.687px;">Sorteren en</div>
<div class="t" style="left:1306.5px;top:109.53px;font-size:10.5px;color:#d2d2d2;letter-spacing:-0.360px;">filteren</div>
<svg style="left:1338.95px;top:114.6px;" width="5.1" height="2.8000000000000003" viewBox="0 0 5.1 2.8000000000000003"><path d="M0 0 h5.1 L2.55 2.8000000000000003z" fill="#ccc"/></svg>
<svg style="left:1368px;top:68px;" width="26" height="26" viewBox="0 0 26 26"><circle cx="16" cy="9" r="7.5" fill="none" stroke="#444" stroke-width="1.2"/><path d="M10.5 14.5 L2 23.5" stroke="#444" stroke-width="1.3"/></svg>
<div class="t" style="left:1360px;top:96.83px;font-size:10.5px;color:#222;letter-spacing:-0.828px;">Zoeken en</div>
<div class="t" style="left:1355.5px;top:109.53px;font-size:10.5px;color:#222;letter-spacing:-0.772px;">selecteren</div>
<svg style="left:1400.95px;top:114.6px;" width="5.1" height="2.8000000000000003" viewBox="0 0 5.1 2.8000000000000003"><path d="M0 0 h5.1 L2.55 2.8000000000000003z" fill="#555"/></svg>
<div class="a" style="left:1415px;top:68px;width:1px;height:68px;background:#ededed;"></div>
<div class="a" style="left:7.5px;top:150.5px;width:226px;height:17.5px;background:#fff;border-radius:2px"></div>
<div class="t" style="left:12px;top:154.37px;font-size:9.5px;color:#333;letter-spacing:0.048px;">A57</div>
<svg style="left:222px;top:157px;" width="9" height="6" viewBox="0 0 9 6"><path d="M1 1 l3.5 3.5 l3.5-3.5" fill="none" stroke="#444" stroke-width="1"/></svg>
<div class="a" style="left:243.5px;top:155px;width:1px;height:1.5px;background:#b0b0b0;"></div>
<div class="a" style="left:243.5px;top:159px;width:1px;height:1.5px;background:#b0b0b0;"></div>
<div class="a" style="left:243.5px;top:163px;width:1px;height:1.5px;background:#b0b0b0;"></div>
<div class="a" style="left:251.5px;top:150.5px;width:58px;height:17.5px;background:#fff;border-radius:2px"></div>
<svg style="left:257px;top:155px;" width="9" height="9" viewBox="0 0 9 9"><path d="M1 1 L8 8 M8 1 L1 8" stroke="#c8c8c8" stroke-width="1.1"/></svg>
<svg style="left:275px;top:155px;" width="12" height="9" viewBox="0 0 12 9"><path d="M1 5 l3 3 l7-7" fill="none" stroke="#d0d0d0" stroke-width="1.1"/></svg>
<div class="t" style="left:296px;top:152.5px;font-size:12.5px;font-style:italic;font-family:'Liberation Serif',serif;color:#333;letter-spacing:-.5px">f<span style="font-size:10px">x</span></div>
<div class="a" style="left:314.5px;top:150.5px;width:1215.5px;height:17.5px;background:#fff;border-radius:2px"></div>
<svg style="left:1517px;top:156.5px;" width="10" height="7" viewBox="0 0 10 7"><path d="M1 1 l4 4 l4-4" fill="none" stroke="#555" stroke-width="1.2"/></svg>
<div class="a" style="left:21.0px;top:189.5px;width:961.5px;height:635.0px;background:#fff;"></div>
<div class="a" style="left:0px;top:174.5px;width:1520px;height:15.0px;background:#f0f0f0;"></div>
<div class="a" style="left:21.0px;top:188.5px;width:961.5px;height:1px;background:#cfcfcf;"></div>
<svg style="left:8px;top:178px;" width="11" height="10" viewBox="0 0 11 10"><path d="M10 0 v9 h-9z" fill="#d6d6d6"/></svg>
<div class="a" style="left:20.7px;top:174.5px;width:15.3px;height:15.0px;background:#d6d6d6;"></div>
<div class="a" style="left:20.7px;top:187.5px;width:15.3px;height:2px;background:#107c41;"></div>
<div class="t" style="left:25.3399658203125px;top:177.47px;font-size:9.5px;color:#333;letter-spacing:-0.317px;">A</div>
<div class="a" style="left:35.5px;top:185.5px;width:1px;height:3px;background:#dcdcdc;"></div>
<div class="t" style="left:52.4899658203125px;top:177.47px;font-size:9.5px;color:#5e5e5e;letter-spacing:-0.317px;">B</div>
<div class="a" style="left:74.5px;top:185.5px;width:1px;height:3px;background:#dcdcdc;"></div>
<div class="t" style="left:179.7413330078125px;top:177.47px;font-size:9.5px;color:#5e5e5e;letter-spacing:-0.343px;">C</div>
<div class="a" style="left:290.5px;top:185.5px;width:1px;height:3px;background:#dcdcdc;"></div>
<div class="t" style="left:319.7413330078125px;top:177.47px;font-size:9.5px;color:#5e5e5e;letter-spacing:-0.343px;">D</div>
<div class="a" style="left:354.5px;top:185.5px;width:1px;height:3px;background:#dcdcdc;"></div>
<div class="t" style="left:383.9899658203125px;top:177.47px;font-size:9.5px;color:#5e5e5e;letter-spacing:-0.317px;">E</div>
<div class="a" style="left:418.5px;top:185.5px;width:1px;height:3px;background:#dcdcdc;"></div>
<div class="t" style="left:448.543701171875px;top:177.47px;font-size:9.5px;color:#5e5e5e;letter-spacing:-0.290px;">F</div>
<div class="a" style="left:483.1px;top:185.5px;width:1px;height:3px;background:#dcdcdc;"></div>
<div class="t" style="left:499.7899169921875px;top:177.47px;font-size:9.5px;color:#5e5e5e;letter-spacing:-0.369px;">G</div>
<div class="a" style="left:522.5px;top:185.5px;width:1px;height:3px;background:#dcdcdc;"></div>
<div class="t" style="left:627.7413330078125px;top:177.47px;font-size:9.5px;color:#5e5e5e;letter-spacing:-0.343px;">H</div>
<div class="a" style="left:738.5px;top:185.5px;width:1px;height:3px;background:#dcdcdc;"></div>
<div class="t" style="left:769.7461669921875px;top:177.47px;font-size:9.5px;color:#5e5e5e;letter-spacing:-0.132px;">I</div>
<div class="a" style="left:802.5px;top:185.5px;width:1px;height:3px;background:#dcdcdc;"></div>
<div class="t" style="left:832.74375px;top:177.47px;font-size:9.5px;color:#5e5e5e;letter-spacing:-0.237px;">J</div>
<div class="a" style="left:866.5px;top:185.5px;width:1px;height:3px;background:#dcdcdc;"></div>
<div class="t" style="left:871.9899658203125px;top:177.47px;font-size:9.5px;color:#5e5e5e;letter-spacing:-0.317px;">K</div>
<div class="a" style="left:882.5px;top:185.5px;width:1px;height:3px;background:#dcdcdc;"></div>
<div class="t" style="left:922.740478515625px;top:177.47px;font-size:9.5px;color:#5e5e5e;letter-spacing:-0.264px;">L</div>
<div class="a" style="left:967.0px;top:185.5px;width:1px;height:3px;background:#dcdcdc;"></div>
<div class="t" style="left:971.2408203125px;top:177.47px;font-size:9.5px;color:#5e5e5e;letter-spacing:-0.396px;">M</div>
<div class="a" style="left:0px;top:189.5px;width:21.0px;height:635.0px;background:#f0f0f0;"></div>
<div class="a" style="left:20.5px;top:189.5px;width:1px;height:635.0px;background:#d4d4d4;"></div>
<div class="t" style="left:7.9582763671875px;top:192.90px;font-size:10px;color:#666;letter-spacing:-0.278px;">1</div>
<div class="t" style="left:7.9582763671875px;top:224.40px;font-size:10px;color:#666;letter-spacing:-0.278px;">2</div>
<div class="t" style="left:7.9582763671875px;top:247.80px;font-size:10px;color:#666;letter-spacing:-0.278px;">5</div>
<div class="t" style="left:7.9582763671875px;top:263.90px;font-size:10px;color:#666;letter-spacing:-0.278px;">6</div>
<div class="t" style="left:7.9582763671875px;top:278.60px;font-size:10px;color:#666;letter-spacing:-0.278px;">7</div>
<div class="t" style="left:7.9582763671875px;top:297.90px;font-size:10px;color:#666;letter-spacing:-0.278px;">9</div>
<div class="t" style="left:5.316552734375px;top:326.20px;font-size:10px;color:#666;letter-spacing:-0.556px;">10</div>
<div class="t" style="left:5.669091796875px;top:346.40px;font-size:10px;color:#666;letter-spacing:-0.519px;">11</div>
<div class="t" style="left:5.316552734375px;top:361.60px;font-size:10px;color:#666;letter-spacing:-0.556px;">12</div>
<div class="t" style="left:5.316552734375px;top:376.60px;font-size:10px;color:#666;letter-spacing:-0.556px;">13</div>
<div class="t" style="left:5.316552734375px;top:391.90px;font-size:10px;color:#666;letter-spacing:-0.556px;">14</div>
<div class="t" style="left:5.316552734375px;top:407.10px;font-size:10px;color:#666;letter-spacing:-0.556px;">15</div>
<div class="t" style="left:5.316552734375px;top:422.30px;font-size:10px;color:#666;letter-spacing:-0.556px;">16</div>
<div class="t" style="left:5.316552734375px;top:437.50px;font-size:10px;color:#666;letter-spacing:-0.556px;">17</div>
<div class="t" style="left:5.316552734375px;top:452.70px;font-size:10px;color:#666;letter-spacing:-0.556px;">18</div>
<div class="t" style="left:5.316552734375px;top:467.90px;font-size:10px;color:#666;letter-spacing:-0.556px;">19</div>
<div class="t" style="left:5.316552734375px;top:483.10px;font-size:10px;color:#666;letter-spacing:-0.556px;">20</div>
<div class="t" style="left:5.316552734375px;top:498.30px;font-size:10px;color:#666;letter-spacing:-0.556px;">21</div>
<div class="t" style="left:5.316552734375px;top:513.50px;font-size:10px;color:#666;letter-spacing:-0.556px;">22</div>
<div class="t" style="left:5.316552734375px;top:528.70px;font-size:10px;color:#666;letter-spacing:-0.556px;">23</div>
<div class="t" style="left:5.316552734375px;top:543.90px;font-size:10px;color:#666;letter-spacing:-0.556px;">24</div>
<div class="t" style="left:5.316552734375px;top:559.10px;font-size:10px;color:#666;letter-spacing:-0.556px;">25</div>
<div class="t" style="left:5.316552734375px;top:574.30px;font-size:10px;color:#666;letter-spacing:-0.556px;">26</div>
<div class="t" style="left:5.316552734375px;top:589.50px;font-size:10px;color:#666;letter-spacing:-0.556px;">27</div>
<div class="t" style="left:5.316552734375px;top:604.70px;font-size:10px;color:#666;letter-spacing:-0.556px;">28</div>
<div class="t" style="left:5.316552734375px;top:619.90px;font-size:10px;color:#666;letter-spacing:-0.556px;">29</div>
<div class="t" style="left:5.316552734375px;top:635.10px;font-size:10px;color:#666;letter-spacing:-0.556px;">30</div>
<div class="t" style="left:5.316552734375px;top:650.30px;font-size:10px;color:#666;letter-spacing:-0.556px;">31</div>
<div class="t" style="left:5.316552734375px;top:665.50px;font-size:10px;color:#666;letter-spacing:-0.556px;">32</div>
<div class="t" style="left:5.316552734375px;top:680.70px;font-size:10px;color:#666;letter-spacing:-0.556px;">33</div>
<div class="t" style="left:5.316552734375px;top:695.90px;font-size:10px;color:#666;letter-spacing:-0.556px;">34</div>
<div class="t" style="left:5.316552734375px;top:711.10px;font-size:10px;color:#666;letter-spacing:-0.556px;">35</div>
<div class="t" style="left:5.316552734375px;top:726.30px;font-size:10px;color:#666;letter-spacing:-0.556px;">36</div>
<div class="t" style="left:5.316552734375px;top:741.50px;font-size:10px;color:#666;letter-spacing:-0.556px;">37</div>
<div class="t" style="left:5.316552734375px;top:756.70px;font-size:10px;color:#666;letter-spacing:-0.556px;">38</div>
<div class="t" style="left:5.316552734375px;top:771.90px;font-size:10px;color:#666;letter-spacing:-0.556px;">39</div>
<div class="t" style="left:5.316552734375px;top:787.10px;font-size:10px;color:#666;letter-spacing:-0.556px;">40</div>
<div class="t" style="left:5.316552734375px;top:802.30px;font-size:10px;color:#666;letter-spacing:-0.556px;">41</div>
<div class="t" style="left:5.316552734375px;top:817.50px;font-size:10px;color:#666;letter-spacing:-0.556px;">42</div>
<div class="a" style="left:8px;top:203.5px;width:12px;height:1px;background:#dedede;"></div>
<div class="a" style="left:8px;top:235.0px;width:12px;height:1px;background:#dedede;"></div>
<div class="a" style="left:8px;top:239.0px;width:12px;height:1px;background:#dedede;"></div>
<div class="a" style="left:8px;top:244.0px;width:12px;height:1px;background:#dedede;"></div>
<div class="a" style="left:8px;top:289.5px;width:12px;height:1px;background:#dedede;"></div>
<div class="a" style="left:8px;top:295.0px;width:12px;height:1px;background:#dedede;"></div>
<div class="a" style="left:8px;top:310.2px;width:12px;height:1px;background:#dedede;"></div>
<div class="a" style="left:8px;top:342.5px;width:12px;height:1px;background:#dedede;"></div>
<div class="a" style="left:36px;top:204px;width:932px;height:31.5px;background:#0070c0;"></div>
<div class="a" style="left:36px;top:235.5px;width:932px;height:4px;background:#a5a5a5;"></div>
<div class="a" style="left:36px;top:244.5px;width:932px;height:51px;background:#f2f2f2;"></div>
<svg style="left:37.8px;top:207.4px;" width="26" height="25" viewBox="0 0 26 25"><path d="M13 0.6 L0.6 12.2 l1.9 2 L13 4.6 l10.5 9.6 l1.9-2z" fill="#fff"/><path d="M13 6.6 L4.2 14.8 V24 h6.3 v-6.6 h5 v6.6 h6.3 V14.8z" fill="#fff"/></svg>
<div class="t" style="left:76px;top:214.80px;font-size:10px;color:#fff;letter-spacing:0.162px;">VvE Boschpark | 1.46 | woensdag 26 oktober 2022 12:14</div>
<svg style="left:66px;top:247px;" width="26" height="26" viewBox="0 0 26 26"><path d="M10.36 4.80 L10.57 2.80 L14.63 2.80 L14.84 4.80 L16.81 5.62 L18.38 4.35 L21.25 7.22 L19.98 8.79 L20.80 10.76 L22.80 10.97 L22.80 15.03 L20.80 15.24 L19.98 17.21 L21.25 18.78 L18.38 21.65 L16.81 20.38 L14.84 21.20 L14.63 23.20 L10.57 23.20 L10.36 21.20 L8.39 20.38 L6.82 21.65 L3.95 18.78 L5.22 17.21 L4.40 15.24 L2.40 15.03 L2.40 10.97 L4.40 10.76 L5.22 8.79 L3.95 7.22 L6.82 4.35 L8.39 5.62 Z" fill="#0a6fc2" stroke="#0a6fc2" stroke-width="1.8" stroke-linejoin="round"/><circle cx="12.6" cy="13" r="3.6" fill="#f2f2f2"/></svg>
<div class="t" style="left:47.6px;top:278.63px;font-size:10.5px;color:#333;letter-spacing:-0.295px;font-weight:bold;">Instellingen</div>
<svg style="left:143px;top:248px;" width="28" height="24" viewBox="0 0 28 24"><path d="M0.8000000000000007 15.3 v2.2 a8.7 3.6 0 0 0 17.4 0 v-2.2 z" fill="#0a6fc2"/><ellipse cx="9.5" cy="15.3" rx="8.7" ry="3.6" fill="#0a6fc2"/><ellipse cx="9.5" cy="15.3" rx="6.6" ry="2.1" fill="#cfe1f3"/><path d="M0.8 14.2 a8.7 3.6 0 0 0 17.4 0" fill="none" stroke="#f2f2f2" stroke-width=".9"/><path d="M0.8000000000000007 10.3 v2.6 a8.7 3.6 0 0 0 17.4 0 v-2.6 z" fill="#0a6fc2"/><ellipse cx="9.5" cy="10.3" rx="8.7" ry="3.6" fill="#0a6fc2"/><ellipse cx="9.5" cy="10.3" rx="6.6" ry="2.1" fill="#cfe1f3"/><path d="M0.8 9.6 a8.7 3.6 0 0 0 17.4 0" fill="none" stroke="#f2f2f2" stroke-width=".9"/><path d="M0.8000000000000007 5 v2.8 a8.7 3.6 0 0 0 17.4 0 v-2.8 z" fill="#0a6fc2"/><ellipse cx="9.5" cy="5" rx="8.7" ry="3.6" fill="#0a6fc2"/><ellipse cx="9.5" cy="5" rx="6.6" ry="2.1" fill="#cfe1f3"/><ellipse cx="18" cy="14.3" rx="10" ry="5" fill="#f2f2f2"/><path d="M9.5 18.6 v2.2 a8.7 3.5 0 0 0 17.4 0 v-2.2 z" fill="#0a6fc2"/><ellipse cx="18.2" cy="18.6" rx="8.7" ry="3.5" fill="#0a6fc2"/><ellipse cx="18.2" cy="18.6" rx="6.6" ry="2.0" fill="#cfe1f3"/><path d="M9.5 17.6 a8.7 3.5 0 0 0 17.4 0" fill="none" stroke="#f2f2f2" stroke-width=".9"/><path d="M9.5 14 v2.6 a8.7 3.5 0 0 0 17.4 0 v-2.6 z" fill="#0a6fc2"/><ellipse cx="18.2" cy="14" rx="8.7" ry="3.5" fill="#0a6fc2"/><ellipse cx="18.2" cy="14" rx="6.6" ry="2.0" fill="#cfe1f3"/></svg>
<div class="t" style="left:127.9px;top:278.63px;font-size:10.5px;color:#333;letter-spacing:-0.535px;font-weight:bold;">Rekeningen</div>
<svg style="left:226.5px;top:247.5px;" width="21" height="26" viewBox="0 0 21 26"><rect x="1.2" y="1.2" width="18.2" height="23.2" fill="#e8f1fa" stroke="#0a6fc2" stroke-width="2.2"/><path d="M4.2 6.0 l1.2 1.2 l2-2.4" fill="none" stroke="#0a6fc2" stroke-width="1.1"/><path d="M9.4 5.8 h6.6" stroke="#0a6fc2" stroke-width="1.5"/><path d="M4.2 10.900000000000002 l1.2 1.2 l2-2.4" fill="none" stroke="#0a6fc2" stroke-width="1.1"/><path d="M9.4 10.700000000000001 h6.6" stroke="#0a6fc2" stroke-width="1.5"/><path d="M4.2 15.8 l1.2 1.2 l2-2.4" fill="none" stroke="#0a6fc2" stroke-width="1.1"/><path d="M9.4 15.6 h6.6" stroke="#0a6fc2" stroke-width="1.5"/><path d="M4.2 20.700000000000003 l1.2 1.2 l2-2.4" fill="none" stroke="#0a6fc2" stroke-width="1.1"/><path d="M9.4 20.500000000000004 h6.6" stroke="#0a6fc2" stroke-width="1.5"/></svg>
<div class="t" style="left:206.2px;top:278.63px;font-size:10.5px;color:#333;letter-spacing:-0.328px;font-weight:bold;">Categorieën</div>
<svg style="left:302px;top:248.5px;" width="26" height="23.5" viewBox="0 0 26 23.5"><rect x="4.5" y="0.5" width="7" height="9" fill="#0a6fc2"/><rect x="6" y="2" width="4" height="1.6" fill="#dbe9f6"/><rect x="6" y="4.6" width="4" height="1.4" fill="#dbe9f6"/><rect x="6" y="7" width="4" height="1.2" fill="#dbe9f6"/><path d="M3.5 5 h17 q1.5 0 2 1.5 l2 9 h-24 l2-9 q.3-1.5 1-1.5z" fill="#0a6fc2"/><rect x="13.5" y="7" width="7" height="3.2" fill="#dbe9f6"/><rect x="0.5" y="16.6" width="25" height="6.4" fill="#0a6fc2"/><path d="M0.5 19.6 h25" stroke="#dbe9f6" stroke-width=".7"/><rect x="11.8" y="17.6" width="2.4" height="1.1" fill="#dbe9f6"/></svg>
<div class="t" style="left:287.4px;top:278.53px;font-size:10.5px;color:#333;letter-spacing:-0.299px;font-weight:bold;">Transacties</div>
<svg style="left:382.2px;top:249.5px;" width="23.5" height="23" viewBox="0 0 23.5 23"><rect x="0" y="0" width="23.5" height="23" fill="#0a6fc2"/><rect x="2.2" y="2.2" width="8.2" height="8" fill="#e8f1fa"/><rect x="13.1" y="2.2" width="8.2" height="8" fill="#e8f1fa"/><rect x="2.2" y="12.899999999999999" width="8.2" height="8" fill="#e8f1fa"/><rect x="13.1" y="12.899999999999999" width="8.2" height="8" fill="#e8f1fa"/><path d="M3.8 6.2 h5 M6.3 3.7 v5 M14.7 6.2 h5 M4.6 15.2 l3.4 3.4 M8 15.2 l-3.4 3.4 M14.7 15.6 h5 M14.7 18.2 h5" stroke="#0a6fc2" stroke-width="1.3"/></svg>
<div class="t" style="left:361.8px;top:278.53px;font-size:10.5px;color:#333;letter-spacing:-0.207px;font-weight:bold;">W&amp;V / Balans</div>
<svg style="left:462.5px;top:248.5px;" width="28" height="24" viewBox="0 0 28 24"><path d="M0.8000000000000007 15.3 v2.2 a8.7 3.6 0 0 0 17.4 0 v-2.2 z" fill="#0a6fc2"/><ellipse cx="9.5" cy="15.3" rx="8.7" ry="3.6" fill="#0a6fc2"/><ellipse cx="9.5" cy="15.3" rx="6.6" ry="2.1" fill="#cfe1f3"/><path d="M0.8 14.2 a8.7 3.6 0 0 0 17.4 0" fill="none" stroke="#f2f2f2" stroke-width=".9"/><path d="M0.8000000000000007 10.3 v2.6 a8.7 3.6 0 0 0 17.4 0 v-2.6 z" fill="#0a6fc2"/><ellipse cx="9.5" cy="10.3" rx="8.7" ry="3.6" fill="#0a6fc2"/><ellipse cx="9.5" cy="10.3" rx="6.6" ry="2.1" fill="#cfe1f3"/><path d="M0.8 9.6 a8.7 3.6 0 0 0 17.4 0" fill="none" stroke="#f2f2f2" stroke-width=".9"/><path d="M0.8000000000000007 5 v2.8 a8.7 3.6 0 0 0 17.4 0 v-2.8 z" fill="#0a6fc2"/><ellipse cx="9.5" cy="5" rx="8.7" ry="3.6" fill="#0a6fc2"/><ellipse cx="9.5" cy="5" rx="6.6" ry="2.1" fill="#cfe1f3"/><ellipse cx="18" cy="14.3" rx="10" ry="5" fill="#f2f2f2"/><path d="M9.5 18.6 v2.2 a8.7 3.5 0 0 0 17.4 0 v-2.2 z" fill="#0a6fc2"/><ellipse cx="18.2" cy="18.6" rx="8.7" ry="3.5" fill="#0a6fc2"/><ellipse cx="18.2" cy="18.6" rx="6.6" ry="2.0" fill="#cfe1f3"/><path d="M9.5 17.6 a8.7 3.5 0 0 0 17.4 0" fill="none" stroke="#f2f2f2" stroke-width=".9"/><path d="M9.5 14 v2.6 a8.7 3.5 0 0 0 17.4 0 v-2.6 z" fill="#0a6fc2"/><ellipse cx="18.2" cy="14" rx="8.7" ry="3.5" fill="#0a6fc2"/><ellipse cx="18.2" cy="14" rx="6.6" ry="2.0" fill="#cfe1f3"/></svg>
<div class="t" style="left:451.3px;top:278.73px;font-size:10.5px;color:#333;letter-spacing:-0.485px;font-weight:bold;">Begroting</div>
<svg style="left:539px;top:251.4px;" width="26.5" height="20" viewBox="0 0 26.5 20"><rect x="0.2" y="8.4" width="5.4" height="11.6" fill="#0a6fc2"/><rect x="5.2" y="0.3" width="6.6" height="19.7" fill="#0a6fc2"/><rect x="11.0" y="10.6" width="5.6" height="9.4" fill="#0a6fc2"/><rect x="17.8" y="1.4" width="8.2" height="18.6" fill="#0a6fc2"/><rect x="4.2" y="4.2" width="2" height="16" fill="#0a6fc2"/><path d="M1.8 9.8 V19.2" stroke="#5aa2dc" stroke-width=".6"/><path d="M3.7 9.8 V19.2" stroke="#5aa2dc" stroke-width=".6"/><path d="M0.8 10.9 h4.2" stroke="#0a6fc2" stroke-width=".7"/><path d="M0.8 13.5 h4.2" stroke="#0a6fc2" stroke-width=".7"/><path d="M0.8 16.1 h4.2" stroke="#0a6fc2" stroke-width=".7"/><path d="M0.8 18.7 h4.2" stroke="#0a6fc2" stroke-width=".7"/><path d="M6.8 1.7 V19.2" stroke="#5aa2dc" stroke-width=".6"/><path d="M8.7 1.7 V19.2" stroke="#5aa2dc" stroke-width=".6"/><path d="M10.6 1.7 V19.2" stroke="#5aa2dc" stroke-width=".6"/><path d="M5.8 2.8 h5.3999999999999995" stroke="#0a6fc2" stroke-width=".7"/><path d="M5.8 5.4 h5.3999999999999995" stroke="#0a6fc2" stroke-width=".7"/><path d="M5.8 8.0 h5.3999999999999995" stroke="#0a6fc2" stroke-width=".7"/><path d="M5.8 10.6 h5.3999999999999995" stroke="#0a6fc2" stroke-width=".7"/><path d="M5.8 13.2 h5.3999999999999995" stroke="#0a6fc2" stroke-width=".7"/><path d="M5.8 15.8 h5.3999999999999995" stroke="#0a6fc2" stroke-width=".7"/><path d="M5.8 18.4 h5.3999999999999995" stroke="#0a6fc2" stroke-width=".7"/><path d="M12.6 12.0 V19.2" stroke="#5aa2dc" stroke-width=".6"/><path d="M14.5 12.0 V19.2" stroke="#5aa2dc" stroke-width=".6"/><path d="M11.6 13.1 h4.3999999999999995" stroke="#0a6fc2" stroke-width=".7"/><path d="M11.6 15.7 h4.3999999999999995" stroke="#0a6fc2" stroke-width=".7"/><path d="M11.6 18.3 h4.3999999999999995" stroke="#0a6fc2" stroke-width=".7"/><path d="M19.4 2.8 V19.2" stroke="#5aa2dc" stroke-width=".6"/><path d="M21.3 2.8 V19.2" stroke="#5aa2dc" stroke-width=".6"/><path d="M23.2 2.8 V19.2" stroke="#5aa2dc" stroke-width=".6"/><path d="M25.1 2.8 V19.2" stroke="#5aa2dc" stroke-width=".6"/><path d="M18.400000000000002 3.9 h6.999999999999999" stroke="#0a6fc2" stroke-width=".7"/><path d="M18.400000000000002 6.5 h6.999999999999999" stroke="#0a6fc2" stroke-width=".7"/><path d="M18.400000000000002 9.1 h6.999999999999999" stroke="#0a6fc2" stroke-width=".7"/><path d="M18.400000000000002 11.7 h6.999999999999999" stroke="#0a6fc2" stroke-width=".7"/><path d="M18.400000000000002 14.3 h6.999999999999999" stroke="#0a6fc2" stroke-width=".7"/><path d="M18.400000000000002 16.9 h6.999999999999999" stroke="#0a6fc2" stroke-width=".7"/></svg>
<div class="t" style="left:517.8px;top:277.33px;font-size:10.5px;color:#333;letter-spacing:-0.235px;font-weight:bold;">Appartementen</div>
<svg style="left:624.7px;top:249px;" width="21.6" height="22" viewBox="0 0 21.6 22"><circle cx="10.8" cy="5.6" r="5.4" fill="#0a6fc2"/><path d="M0.2 21.8 v-3.6 q0-5 5.4-5.6 q5.2 2.4 10.4 0 q5.4 .6 5.4 5.6 v3.6z" fill="#0a6fc2"/></svg>
<div class="t" style="left:611.5px;top:277.33px;font-size:10.5px;color:#333;letter-spacing:-0.496px;font-weight:bold;">Eigenaren</div>
<svg style="left:698px;top:250.6px;" width="29" height="18" viewBox="0 0 29 18"><path d="M2 16.6 A12.4 14.6 0 0 1 27 16.6" fill="none" stroke="#0a6fc2" stroke-width="2.6"/><path d="M14.6 14.6 L21.8 6.2" stroke="#0a6fc2" stroke-width="2.1" stroke-linecap="round"/></svg>
<div class="t" style="left:690.8px;top:278.33px;font-size:10.5px;color:#333;letter-spacing:-0.756px;font-weight:bold;">Dashboard</div>
<svg style="left:785px;top:249px;" width="23" height="23" viewBox="0 0 23 23"><path d="M1.2 0 V21.6 H22.6" fill="none" stroke="#0a6fc2" stroke-width="2.2"/><rect x="4.6" y="8.2" width="3" height="10.2" fill="#0a6fc2"/><rect x="9" y="1.6" width="3.4" height="16.799999999999997" fill="#0a6fc2"/><rect x="13.8" y="6.2" width="3.2" height="12.2" fill="#0a6fc2"/><rect x="18.4" y="12.4" width="3" height="5.999999999999998" fill="#0a6fc2"/></svg>
<div class="t" style="left:762.8px;top:278.73px;font-size:10.5px;color:#333;letter-spacing:-0.387px;font-weight:bold;">Samenvatting</div>
<svg style="left:862.2px;top:248px;" width="25" height="25" viewBox="0 0 25 25"><circle cx="11.3" cy="13.2" r="9.6" fill="none" stroke="#0a6fc2" stroke-width="2.4"/><circle cx="11.3" cy="13.2" r="5.3" fill="none" stroke="#0a6fc2" stroke-width="2"/><circle cx="11.3" cy="13.2" r="2.3" fill="#0a6fc2"/><path d="M11.3 13.2 L21 3.5" stroke="#f2f2f2" stroke-width="3.4"/><path d="M11.3 13.2 L20.4 4.1" stroke="#0a6fc2" stroke-width="1.5"/><path d="M18 5 l.6-3.4 l2.6-1.4 l.4 2.6 l2.6 .4 l-1.4 2.6 l-3.4 .6z" fill="#0a6fc2"/></svg>
<div class="t" style="left:859.5px;top:277.93px;font-size:10.5px;color:#333;letter-spacing:-0.272px;font-weight:bold;">Top 10</div>
<div class="t" style="left:40px;top:316.56px;font-size:21px;color:#0070c0;letter-spacing:0.240px;font-weight:bold;">Winst- en verliesrekening</div>
<div class="t" style="left:487.6px;top:316.56px;font-size:21px;color:#0070c0;letter-spacing:-0.574px;font-weight:bold;">Balans</div>
<div class="t" style="left:38px;top:346.20px;font-size:10px;color:#222;letter-spacing:-0.055px;">VvE Boschpark</div>
<div class="t" style="left:329px;top:346.20px;font-size:10px;color:#222;letter-spacing:0.220px;">T/m 31 maart 2022</div>
<div class="t" style="left:485.9px;top:346.20px;font-size:10px;color:#222;letter-spacing:-0.055px;">VvE Boschpark</div>
<div class="t" style="left:780.4px;top:346.20px;font-size:10px;color:#222;letter-spacing:0.111px;">Per 31 maart 2022</div>
<div class="a" style="left:36px;top:388.3px;width:383.2px;height:15.199999999999989px;background:#f2f2f2;"></div>
<div class="a" style="left:36px;top:418.7px;width:383.2px;height:15.199999999999989px;background:#f2f2f2;"></div>
<div class="a" style="left:36px;top:449.1px;width:383.2px;height:15.199999999999989px;background:#f2f2f2;"></div>
<div class="a" style="left:36px;top:479.5px;width:383.2px;height:15.199999999999989px;background:#f2f2f2;"></div>
<div class="a" style="left:36px;top:509.9px;width:383.2px;height:15.200000000000045px;background:#f2f2f2;"></div>
<div class="a" style="left:36px;top:540.3px;width:383.2px;height:15.200000000000045px;background:#f2f2f2;"></div>
<div class="a" style="left:36px;top:570.7px;width:383.2px;height:15.199999999999932px;background:#f2f2f2;"></div>
<div class="a" style="left:36px;top:601.1px;width:383.2px;height:15.199999999999932px;background:#f2f2f2;"></div>
<div class="a" style="left:36px;top:631.5px;width:383.2px;height:15.200000000000045px;background:#f2f2f2;"></div>
<div class="a" style="left:36px;top:661.9px;width:383.2px;height:15.200000000000045px;background:#f2f2f2;"></div>
<div class="a" style="left:36px;top:692.3px;width:383.2px;height:15.200000000000045px;background:#f2f2f2;"></div>
<div class="a" style="left:36px;top:722.7px;width:383.2px;height:15.199999999999932px;background:#f2f2f2;"></div>
<div class="a" style="left:36px;top:753.0999999999999px;width:383.2px;height:15.200000000000045px;background:#f2f2f2;"></div>
<div class="a" style="left:36px;top:783.5px;width:383.2px;height:15.200000000000045px;background:#f2f2f2;"></div>
<div class="a" style="left:36px;top:813.9px;width:383.2px;height:10.600000000000023px;background:#f2f2f2;"></div>
<div class="a" style="left:35.5px;top:388px;width:1px;height:436.5px;background:#e0e0e0;"></div>
<div class="a" style="left:74.5px;top:388px;width:1px;height:436.5px;background:#e0e0e0;"></div>
<div class="a" style="left:290.8px;top:388px;width:1px;height:436.5px;background:#e0e0e0;"></div>
<div class="a" style="left:354.9px;top:388px;width:1px;height:436.5px;background:#e0e0e0;"></div>
<div class="a" style="left:418.7px;top:388px;width:1px;height:436.5px;background:#e0e0e0;"></div>
<div class="a" style="left:36px;top:373.3px;width:383.2px;height:14.8px;background:#0070c0;"></div>
<div class="a" style="left:74.5px;top:375.5px;width:1px;height:11px;background:#6fb0e0;"></div>
<div class="a" style="left:290.8px;top:375.5px;width:1px;height:11px;background:#6fb0e0;"></div>
<div class="a" style="left:354.9px;top:375.5px;width:1px;height:11px;background:#6fb0e0;"></div>
<div class="a" style="left:483.6px;top:388.3px;width:383.9px;height:15.199999999999989px;background:#f2f2f2;"></div>
<div class="a" style="left:483.6px;top:418.7px;width:383.9px;height:15.199999999999989px;background:#f2f2f2;"></div>
<div class="a" style="left:483.6px;top:449.1px;width:383.9px;height:15.199999999999989px;background:#f2f2f2;"></div>
<div class="a" style="left:483.6px;top:479.5px;width:383.9px;height:15.199999999999989px;background:#f2f2f2;"></div>
<div class="a" style="left:483.6px;top:509.9px;width:383.9px;height:15.200000000000045px;background:#f2f2f2;"></div>
<div class="a" style="left:483.6px;top:540.3px;width:383.9px;height:15.200000000000045px;background:#f2f2f2;"></div>
<div class="a" style="left:483.6px;top:570.7px;width:383.9px;height:15.199999999999932px;background:#f2f2f2;"></div>
<div class="a" style="left:483.6px;top:601.1px;width:383.9px;height:15.199999999999932px;background:#f2f2f2;"></div>
<div class="a" style="left:483.6px;top:631.5px;width:383.9px;height:15.200000000000045px;background:#f2f2f2;"></div>
<div class="a" style="left:483.6px;top:661.9px;width:383.9px;height:15.200000000000045px;background:#f2f2f2;"></div>
<div class="a" style="left:483.6px;top:692.3px;width:383.9px;height:15.200000000000045px;background:#f2f2f2;"></div>
<div class="a" style="left:483.6px;top:722.7px;width:383.9px;height:15.199999999999932px;background:#f2f2f2;"></div>
<div class="a" style="left:483.6px;top:753.0999999999999px;width:383.9px;height:15.200000000000045px;background:#f2f2f2;"></div>
<div class="a" style="left:483.6px;top:783.5px;width:383.9px;height:15.200000000000045px;background:#f2f2f2;"></div>
<div class="a" style="left:483.1px;top:388px;width:1px;height:425.9px;background:#e0e0e0;"></div>
<div class="a" style="left:522.7px;top:388px;width:1px;height:425.9px;background:#e0e0e0;"></div>
<div class="a" style="left:738.5px;top:388px;width:1px;height:425.9px;background:#e0e0e0;"></div>
<div class="a" style="left:802.9px;top:388px;width:1px;height:425.9px;background:#e0e0e0;"></div>
<div class="a" style="left:867.0px;top:388px;width:1px;height:425.9px;background:#e0e0e0;"></div>
<div class="a" style="left:483.6px;top:373.3px;width:383.9px;height:14.8px;background:#0070c0;"></div>
<div class="a" style="left:522.7px;top:375.5px;width:1px;height:11px;background:#6fb0e0;"></div>
<div class="a" style="left:738.5px;top:375.5px;width:1px;height:11px;background:#6fb0e0;"></div>
<div class="a" style="left:802.9px;top:375.5px;width:1px;height:11px;background:#6fb0e0;"></div>
<div class="t" style="left:38px;top:376.60px;font-size:10px;color:#fff;letter-spacing:-0.294px;">Reknr</div>
<div class="t" style="left:78px;top:376.60px;font-size:10px;color:#fff;letter-spacing:0.128px;">Omschrijving</div>
<div class="t" style="left:319.6px;top:376.60px;font-size:10px;color:#fff;letter-spacing:0.114px;">Verlies</div>
<div class="t" style="left:388.9px;top:376.60px;font-size:10px;color:#fff;letter-spacing:0.125px;">Winst</div>
<div class="t" style="left:486.4px;top:376.60px;font-size:10px;color:#fff;letter-spacing:-0.294px;">Reknr</div>
<div class="t" style="left:526px;top:376.60px;font-size:10px;color:#fff;letter-spacing:0.128px;">Omschrijving</div>
<div class="t" style="left:749.6px;top:376.60px;font-size:10px;color:#fff;letter-spacing:-0.008px;">Bezittingen</div>
<div class="t" style="left:806.6px;top:376.60px;font-size:10px;color:#fff;letter-spacing:0.075px;">EV/schulden</div>
<div class="a" style="left:38.8px;top:394.1px;width:8.4px;height:6px;background:#000;"></div>
<div class="t" style="left:77.8px;top:391.90px;font-size:10px;color:#222;letter-spacing:-0.588px;">OPBRENGSTEN</div>
<div class="t" style="left:38px;top:407.10px;font-size:10px;color:#222;letter-spacing:-0.222px;">8000</div>
<div class="t" style="left:77.8px;top:407.10px;font-size:10px;color:#222;letter-spacing:0.269px;">Periodieke bijdrage eigenaars -</div>
<div class="t" style="left:228.2px;top:407.10px;font-size:10px;color:#222;letter-spacing:0.373px;">adm</div>
<div class="t" style="left:376.2419921875px;top:407.10px;font-size:10px;color:#222;letter-spacing:-0.167px;">3.094,03</div>
<div class="t" style="left:38px;top:422.30px;font-size:10px;color:#222;letter-spacing:-0.222px;">8005</div>
<div class="t" style="left:77.8px;top:422.30px;font-size:10px;color:#222;letter-spacing:0.269px;">Periodieke bijdrage eigenaars -</div>
<div class="t" style="left:228.2px;top:422.30px;font-size:10px;color:#222;letter-spacing:0.168px;">algemeen</div>
<div class="t" style="left:376.2419921875px;top:422.30px;font-size:10px;color:#222;letter-spacing:-0.167px;">4.000,00</div>
<div class="t" style="left:38px;top:437.50px;font-size:10px;color:#222;letter-spacing:-0.222px;">8010</div>
<div class="t" style="left:77.8px;top:437.50px;font-size:10px;color:#222;letter-spacing:0.269px;">Periodieke bijdrage eigenaars -</div>
<div class="t" style="left:228.2px;top:437.50px;font-size:10px;color:#222;letter-spacing:0.233px;">lift</div>
<div class="t" style="left:376.2419921875px;top:437.50px;font-size:10px;color:#222;letter-spacing:-0.167px;">1.714,97</div>
<div class="t" style="left:38px;top:452.70px;font-size:10px;color:#222;letter-spacing:-0.222px;">8050</div>
<div class="t" style="left:77.8px;top:452.70px;font-size:10px;color:#222;letter-spacing:0.229px;">Eenmalige bijdrage eigenaars</div>
<div class="t" style="left:38px;top:467.90px;font-size:10px;color:#222;letter-spacing:-0.222px;">8060</div>
<div class="t" style="left:77.8px;top:467.90px;font-size:10px;color:#222;letter-spacing:0.052px;">Omzet 1</div>
<div class="t" style="left:38px;top:483.10px;font-size:10px;color:#222;letter-spacing:-0.222px;">8070</div>
<div class="t" style="left:77.8px;top:483.10px;font-size:10px;color:#222;letter-spacing:0.152px;">Omzet 2</div>
<div class="t" style="left:38px;top:498.30px;font-size:10px;color:#222;letter-spacing:-0.222px;">8080</div>
<div class="t" style="left:77.8px;top:498.30px;font-size:10px;color:#222;letter-spacing:0.152px;">Omzet 3</div>
<div class="t" style="left:38px;top:513.50px;font-size:10px;color:#222;letter-spacing:-0.222px;">8090</div>
<div class="t" style="left:77.8px;top:513.50px;font-size:10px;color:#222;letter-spacing:0.331px;">Omzet overig</div>
<div class="a" style="left:38.8px;top:530.9px;width:8.4px;height:6px;background:#000;"></div>
<div class="t" style="left:77.8px;top:528.70px;font-size:10px;color:#222;letter-spacing:-0.424px;">KOSTEN</div>
<div class="t" style="left:38px;top:543.90px;font-size:10px;color:#222;letter-spacing:-0.222px;">4000</div>
<div class="t" style="left:77.8px;top:543.90px;font-size:10px;color:#222;letter-spacing:0.240px;">Verzekering -</div>
<div class="t" style="left:143.7px;top:543.90px;font-size:10px;color:#222;letter-spacing:0.180px;">Opstal</div>
<div class="t" style="left:320.331640625px;top:543.90px;font-size:10px;color:#222;letter-spacing:-0.184px;">288,51</div>
<div class="t" style="left:38px;top:559.10px;font-size:10px;color:#222;letter-spacing:-0.222px;">4005</div>
<div class="t" style="left:77.8px;top:559.10px;font-size:10px;color:#222;letter-spacing:0.240px;">Verzekering -</div>
<div class="t" style="left:143.7px;top:559.10px;font-size:10px;color:#222;letter-spacing:-0.487px;">Glas</div>
<div class="t" style="left:325.726318359375px;top:559.10px;font-size:10px;color:#222;letter-spacing:-0.188px;">60,00</div>
<div class="t" style="left:38px;top:574.30px;font-size:10px;color:#222;letter-spacing:-0.222px;">4010</div>
<div class="t" style="left:77.8px;top:574.30px;font-size:10px;color:#222;letter-spacing:0.240px;">Verzekering -</div>
<div class="t" style="left:143.7px;top:574.30px;font-size:10px;color:#222;letter-spacing:-0.737px;">WA</div>
<div class="t" style="left:320.331640625px;top:574.30px;font-size:10px;color:#222;letter-spacing:-0.184px;">250,00</div>
<div class="t" style="left:38px;top:589.50px;font-size:10px;color:#222;letter-spacing:-0.222px;">4015</div>
<div class="t" style="left:77.8px;top:589.50px;font-size:10px;color:#222;letter-spacing:0.240px;">Verzekering -</div>
<div class="t" style="left:143.7px;top:589.50px;font-size:10px;color:#222;letter-spacing:0.085px;">Rechtsbijstand</div>
<div class="t" style="left:38px;top:604.70px;font-size:10px;color:#222;letter-spacing:-0.222px;">4020</div>
<div class="t" style="left:77.8px;top:604.70px;font-size:10px;color:#222;letter-spacing:0.240px;">Verzekering -</div>
<div class="t" style="left:143.7px;top:604.70px;font-size:10px;color:#222;letter-spacing:0.119px;">Bestuurdersaansprakelijkheid</div>
<div class="t" style="left:320.331640625px;top:604.70px;font-size:10px;color:#222;letter-spacing:-0.184px;">218,00</div>
<div class="t" style="left:38px;top:619.90px;font-size:10px;color:#222;letter-spacing:-0.222px;">4025</div>
<div class="t" style="left:77.8px;top:619.90px;font-size:10px;color:#222;letter-spacing:0.240px;">Verzekering -</div>
<div class="t" style="left:143.7px;top:619.90px;font-size:10px;color:#222;letter-spacing:0.249px;">Overig</div>
<div class="t" style="left:325.726318359375px;top:619.90px;font-size:10px;color:#222;letter-spacing:-0.188px;">40,00</div>
<div class="t" style="left:38px;top:635.10px;font-size:10px;color:#222;letter-spacing:-0.222px;">4100</div>
<div class="t" style="left:77.8px;top:635.10px;font-size:10px;color:#222;letter-spacing:0.321px;">Dagelijks onderhoud -</div>
<div class="t" style="left:184.8px;top:635.10px;font-size:10px;color:#222;letter-spacing:0.355px;">Klein onderhoud</div>
<div class="t" style="left:38px;top:650.30px;font-size:10px;color:#222;letter-spacing:-0.222px;">4105</div>
<div class="t" style="left:77.8px;top:650.30px;font-size:10px;color:#222;letter-spacing:0.321px;">Dagelijks onderhoud -</div>
<div class="t" style="left:184.8px;top:650.30px;font-size:10px;color:#222;letter-spacing:0.023px;">Installaties</div>
<div class="t" style="left:38px;top:665.50px;font-size:10px;color:#222;letter-spacing:0.025px;">4110</div>
<div class="t" style="left:77.8px;top:665.50px;font-size:10px;color:#222;letter-spacing:0.321px;">Dagelijks onderhoud -</div>
<div class="t" style="left:184.8px;top:665.50px;font-size:10px;color:#222;letter-spacing:-0.013px;">Lift</div>
<div class="t" style="left:38px;top:680.70px;font-size:10px;color:#222;letter-spacing:0.025px;">4115</div>
<div class="t" style="left:77.8px;top:680.70px;font-size:10px;color:#222;letter-spacing:0.321px;">Dagelijks onderhoud -</div>
<div class="t" style="left:184.8px;top:680.70px;font-size:10px;color:#222;letter-spacing:0.037px;">Schoonmaak</div>
<div class="t" style="left:320.331640625px;top:680.70px;font-size:10px;color:#222;letter-spacing:-0.184px;">375,00</div>
<div class="t" style="left:38px;top:695.90px;font-size:10px;color:#222;letter-spacing:-0.222px;">4120</div>
<div class="t" style="left:77.8px;top:695.90px;font-size:10px;color:#222;letter-spacing:0.321px;">Dagelijks onderhoud -</div>
<div class="t" style="left:184.8px;top:695.90px;font-size:10px;color:#222;letter-spacing:0.049px;">Glasbewassing</div>
<div class="t" style="left:320.331640625px;top:695.90px;font-size:10px;color:#222;letter-spacing:-0.184px;">240,00</div>
<div class="t" style="left:38px;top:711.10px;font-size:10px;color:#222;letter-spacing:-0.222px;">4125</div>
<div class="t" style="left:77.8px;top:711.10px;font-size:10px;color:#222;letter-spacing:0.321px;">Dagelijks onderhoud -</div>
<div class="t" style="left:184.8px;top:711.10px;font-size:10px;color:#222;letter-spacing:0.258px;">Groenvoorziening</div>
<div class="t" style="left:38px;top:726.30px;font-size:10px;color:#222;letter-spacing:-0.222px;">4200</div>
<div class="t" style="left:77.8px;top:726.30px;font-size:10px;color:#222;letter-spacing:0.265px;">Nutsvoorzieningen -</div>
<div class="t" style="left:175.89999999999998px;top:726.30px;font-size:10px;color:#222;letter-spacing:-0.204px;">Elektra</div>
<div class="t" style="left:320.331640625px;top:726.30px;font-size:10px;color:#222;letter-spacing:-0.184px;">525,00</div>
<div class="t" style="left:38px;top:741.50px;font-size:10px;color:#222;letter-spacing:-0.222px;">4201</div>
<div class="t" style="left:77.8px;top:741.50px;font-size:10px;color:#222;letter-spacing:0.265px;">Nutsvoorzieningen -</div>
<div class="t" style="left:175.89999999999998px;top:741.50px;font-size:10px;color:#222;letter-spacing:0.058px;">Elektra - Lift</div>
<div class="t" style="left:312.2419921875px;top:741.50px;font-size:10px;color:#222;letter-spacing:-0.167px;">1.020,00</div>
<div class="t" style="left:38px;top:756.70px;font-size:10px;color:#222;letter-spacing:-0.222px;">4205</div>
<div class="t" style="left:77.8px;top:756.70px;font-size:10px;color:#222;letter-spacing:0.265px;">Nutsvoorzieningen -</div>
<div class="t" style="left:175.89999999999998px;top:756.70px;font-size:10px;color:#222;letter-spacing:0.225px;">Water</div>
<div class="t" style="left:38px;top:771.90px;font-size:10px;color:#222;letter-spacing:-0.222px;">4210</div>
<div class="t" style="left:77.8px;top:771.90px;font-size:10px;color:#222;letter-spacing:0.265px;">Nutsvoorzieningen -</div>
<div class="t" style="left:175.89999999999998px;top:771.90px;font-size:10px;color:#222;letter-spacing:0.143px;">Telefonie Lift</div>
<div class="t" style="left:38px;top:787.10px;font-size:10px;color:#222;letter-spacing:-0.222px;">4300</div>
<div class="t" style="left:77.8px;top:787.10px;font-size:10px;color:#222;letter-spacing:0.248px;">Verenigingskosten -</div>
<div class="t" style="left:174.1px;top:787.10px;font-size:10px;color:#222;letter-spacing:0.265px;">Vergaderkosten</div>
<div class="t" style="left:38px;top:802.30px;font-size:10px;color:#222;letter-spacing:-0.222px;">4305</div>
<div class="t" style="left:77.8px;top:802.30px;font-size:10px;color:#222;letter-spacing:0.248px;">Verenigingskosten -</div>
<div class="t" style="left:174.1px;top:802.30px;font-size:10px;color:#222;letter-spacing:0.208px;">Administratie en beheer</div>
<div class="t" style="left:320.331640625px;top:802.30px;font-size:10px;color:#222;letter-spacing:-0.184px;">525,00</div>
<div class="a" style="left:487.2px;top:394.1px;width:8.4px;height:6px;background:#000;"></div>
<div class="t" style="left:525.6px;top:391.90px;font-size:10px;color:#222;letter-spacing:-0.395px;">ACTIVA</div>
<div class="t" style="left:486.4px;top:407.10px;font-size:10px;color:#222;letter-spacing:-0.222px;">1000</div>
<div class="t" style="left:525.6px;top:407.10px;font-size:10px;color:#222;letter-spacing:-0.318px;">Kas 1</div>
<div class="t" style="left:486.4px;top:422.30px;font-size:10px;color:#222;letter-spacing:-0.222px;">1001</div>
<div class="t" style="left:525.6px;top:422.30px;font-size:10px;color:#222;letter-spacing:-0.018px;">Kas 2</div>
<div class="t" style="left:486.4px;top:437.50px;font-size:10px;color:#222;letter-spacing:0.025px;">1100</div>
<div class="t" style="left:525.6px;top:437.50px;font-size:10px;color:#222;letter-spacing:-0.287px;">Bank 1</div>
<div class="t" style="left:760.3419921875001px;top:437.50px;font-size:10px;color:#222;letter-spacing:-0.167px;">9.477,71</div>
<div class="t" style="left:486.4px;top:452.70px;font-size:10px;color:#222;letter-spacing:0.025px;">1101</div>
<div class="t" style="left:525.6px;top:452.70px;font-size:10px;color:#222;letter-spacing:-0.127px;">Bank 2</div>
<div class="t" style="left:768.431640625px;top:452.70px;font-size:10px;color:#222;letter-spacing:0.113px;">111,00</div>
<div class="t" style="left:486.4px;top:467.90px;font-size:10px;color:#222;letter-spacing:0.025px;">1102</div>
<div class="t" style="left:525.6px;top:467.90px;font-size:10px;color:#222;letter-spacing:-0.127px;">Bank 3</div>
<div class="t" style="left:486.4px;top:483.10px;font-size:10px;color:#222;letter-spacing:0.025px;">1103</div>
<div class="t" style="left:525.6px;top:483.10px;font-size:10px;color:#222;letter-spacing:-0.054px;">Spaar 1</div>
<div class="t" style="left:754.947314453125px;top:483.10px;font-size:10px;color:#222;letter-spacing:-0.167px;">25.000,00</div>
<div class="t" style="left:486.4px;top:498.30px;font-size:10px;color:#222;letter-spacing:0.025px;">1104</div>
<div class="t" style="left:525.6px;top:498.30px;font-size:10px;color:#222;letter-spacing:0.063px;">Spaar 2</div>
<div class="t" style="left:486.4px;top:513.50px;font-size:10px;color:#222;letter-spacing:0.025px;">1105</div>
<div class="t" style="left:525.6px;top:513.50px;font-size:10px;color:#222;letter-spacing:0.063px;">Spaar 3</div>
<div class="t" style="left:486.4px;top:528.70px;font-size:10px;color:#222;letter-spacing:0.025px;">1106</div>
<div class="t" style="left:525.6px;top:528.70px;font-size:10px;color:#222;letter-spacing:0.063px;">Spaar 4</div>
<div class="t" style="left:486.4px;top:543.90px;font-size:10px;color:#222;letter-spacing:0.025px;">1107</div>
<div class="t" style="left:525.6px;top:543.90px;font-size:10px;color:#222;letter-spacing:0.453px;">Memoriaal</div>
<div class="t" style="left:843.52099609375px;top:543.90px;font-size:10px;color:#222;letter-spacing:-0.195px;">0,00</div>
<div class="t" style="left:486.4px;top:559.10px;font-size:10px;color:#222;letter-spacing:-0.222px;">1300</div>
<div class="t" style="left:525.6px;top:559.10px;font-size:10px;color:#222;letter-spacing:0.209px;">Debiteuren</div>
<div class="t" style="left:832.731640625px;top:559.10px;font-size:10px;color:#222;letter-spacing:-0.184px;">712,00</div>
<div class="t" style="left:486.4px;top:574.30px;font-size:10px;color:#222;letter-spacing:-0.222px;">1310</div>
<div class="t" style="left:525.6px;top:574.30px;font-size:10px;color:#222;letter-spacing:0.408px;">Vooruit betaalde bedragen</div>
<div class="t" style="left:486.4px;top:589.50px;font-size:10px;color:#222;letter-spacing:-0.222px;">1320</div>
<div class="t" style="left:525.6px;top:589.50px;font-size:10px;color:#222;letter-spacing:0.388px;">Nog te ontvangen bedragen</div>
<div class="a" style="left:487.2px;top:606.9px;width:8.4px;height:6px;background:#000;"></div>
<div class="t" style="left:525.6px;top:604.70px;font-size:10px;color:#222;letter-spacing:-0.569px;">PASSIVA</div>
<div class="t" style="left:486.4px;top:619.90px;font-size:10px;color:#222;letter-spacing:-0.222px;">0100</div>
<div class="t" style="left:525.6px;top:619.90px;font-size:10px;color:#222;letter-spacing:0.138px;">Reservefonds -</div>
<div class="t" style="left:599.4px;top:619.90px;font-size:10px;color:#222;letter-spacing:0.096px;">Algemeen</div>
<div class="t" style="left:819.247314453125px;top:619.90px;font-size:10px;color:#222;letter-spacing:-0.167px;">21.000,00</div>
<div class="t" style="left:486.4px;top:635.10px;font-size:10px;color:#222;letter-spacing:-0.222px;">0105</div>
<div class="t" style="left:525.6px;top:635.10px;font-size:10px;color:#222;letter-spacing:0.138px;">Reservefonds -</div>
<div class="t" style="left:599.4px;top:635.10px;font-size:10px;color:#222;letter-spacing:0.449px;">Groot onderhoud</div>
<div class="t" style="left:824.6419921875px;top:635.10px;font-size:10px;color:#222;letter-spacing:-0.061px;">9.110,22</div>
<div class="t" style="left:486.4px;top:650.30px;font-size:10px;color:#222;letter-spacing:0.025px;">0110</div>
<div class="t" style="left:525.6px;top:650.30px;font-size:10px;color:#222;letter-spacing:0.138px;">Reservefonds -</div>
<div class="t" style="left:599.4px;top:650.30px;font-size:10px;color:#222;letter-spacing:-0.280px;">Lift</div>
<div class="t" style="left:832.731640625px;top:650.30px;font-size:10px;color:#222;letter-spacing:-0.184px;">250,00</div>
<div class="t" style="left:486.4px;top:665.50px;font-size:10px;color:#222;letter-spacing:-0.222px;">0120</div>
<div class="t" style="left:525.6px;top:665.50px;font-size:10px;color:#222;letter-spacing:0.138px;">Reservefonds -</div>
<div class="t" style="left:599.4px;top:665.50px;font-size:10px;color:#222;letter-spacing:0.209px;">Overig</div>
<div class="t" style="left:824.6419921875px;top:665.50px;font-size:10px;color:#222;letter-spacing:-0.167px;">1.250,00</div>
<div class="t" style="left:486.4px;top:680.70px;font-size:10px;color:#222;letter-spacing:-0.222px;">1400</div>
<div class="t" style="left:525.6px;top:680.70px;font-size:10px;color:#222;letter-spacing:0.155px;">Crediteuren</div>
<div class="t" style="left:832.731640625px;top:680.70px;font-size:10px;color:#222;letter-spacing:-0.184px;">999,00</div>
<div class="t" style="left:486.4px;top:695.90px;font-size:10px;color:#222;letter-spacing:-0.222px;">1410</div>
<div class="t" style="left:525.6px;top:695.90px;font-size:10px;color:#222;letter-spacing:0.396px;">Nog te betalen bedragen</div>
<div class="t" style="left:486.4px;top:711.10px;font-size:10px;color:#222;letter-spacing:-0.222px;">1420</div>
<div class="t" style="left:525.6px;top:711.10px;font-size:10px;color:#222;letter-spacing:0.362px;">Vooruit ontvangen bedragen</div>
<div class="t" style="left:486.4px;top:726.30px;font-size:10px;color:#222;letter-spacing:-0.222px;">2120</div>
<div class="t" style="left:525.6px;top:726.30px;font-size:10px;color:#222;letter-spacing:0.312px;">Doorbelastingen</div>
<div class="t" style="left:486.4px;top:741.50px;font-size:10px;color:#222;letter-spacing:-0.222px;">2130</div>
<div class="t" style="left:525.6px;top:741.50px;font-size:10px;color:#222;letter-spacing:0.154px;">Verzekeringsclaim</div>
<div class="t" style="left:486.4px;top:756.70px;font-size:10px;color:#222;letter-spacing:-0.222px;">2180</div>
<div class="t" style="left:525.6px;top:756.70px;font-size:10px;color:#222;letter-spacing:0.199px;">Kruisposten</div>
<div class="a" style="left:36px;top:813.9px;width:400px;height:10.600000000000023px;overflow:hidden">
<div class="t" style="left:2px;top:3.60px;font-size:10px;color:#222;letter-spacing:-0.222px;">4310</div>
<div class="t" style="left:41.5px;top:3.60px;font-size:10px;color:#222;letter-spacing:0.248px;">Verenigingskosten -</div>
<div class="t" style="left:137.8px;top:3.60px;font-size:10px;color:#222;letter-spacing:-0.140px;">Bankkosten</div>
</div>
<div class="t" style="left:525.5px;top:787.10px;font-size:10px;color:#222;letter-spacing:-0.204px;font-style:italic;">Saldo winst</div>
<div class="t" style="left:824.7419921875px;top:787.10px;font-size:10px;color:#222;letter-spacing:-0.167px;font-style:italic;">1.267,49</div>
<div class="t" style="left:525.5px;top:802.30px;font-size:10px;color:#0070c0;letter-spacing:0.359px;font-weight:bold;">Totaal</div>
<div class="t" style="left:752.278076171875px;top:802.30px;font-size:10px;color:#0070c0;letter-spacing:0.167px;font-weight:bold;">34.588,71</div>
<div class="t" style="left:815.778076171875px;top:802.30px;font-size:10px;color:#0070c0;letter-spacing:0.167px;font-weight:bold;">34.588,71</div>
<div class="a" style="left:739px;top:797.8000000000001px;width:128.5px;height:1.3px;background:#444;"></div>
<div class="a" style="left:483.6px;top:814.1999999999999px;width:384px;height:1px;background:#e0e0e0;"></div>
<div class="a" style="left:0px;top:387.8px;width:1520px;height:1px;background:#a8a8a8;"></div>
<div class="a" style="left:1519px;top:174.5px;width:17px;height:650px;background:#f5f5f5;"></div>
<div class="a" style="left:1518.3px;top:174.5px;width:1px;height:650px;background:#d2d2d2;"></div>
<svg style="left:1523px;top:178px;" width="9" height="6" viewBox="0 0 9 6"><path d="M4.5 0.5 L8.5 5.5 h-8z" fill="#6e6e6e"/></svg>
<div class="a" style="left:1524.3px;top:188.5px;width:6.7px;height:432.5px;background:#727272;border-radius:3.4px"></div>
<svg style="left:1523px;top:815.5px;" width="9" height="6" viewBox="0 0 9 6"><path d="M0.5 0.5 h8 L4.5 5.5z" fill="#6e6e6e"/></svg>
<div class="a" style="left:0px;top:824px;width:1536px;height:21.5px;background:#f4f4f4;"></div>
<div class="a" style="left:0px;top:823.6px;width:1536px;height:1px;background:#cfcfcf;"></div>
<svg style="left:20px;top:830px;" width="6" height="8" viewBox="0 0 6 8"><path d="M5.5 0.5 v7 L0.8 4z" fill="#555"/></svg>
<svg style="left:43.5px;top:830px;" width="6" height="8" viewBox="0 0 6 8"><path d="M0.5 0.5 v7 L5.2 4z" fill="#555"/></svg>
<div class="a" style="left:64.5px;top:836.5px;width:1.6px;height:1.6px;background:#555;"></div>
<div class="a" style="left:68.0px;top:836.5px;width:1.6px;height:1.6px;background:#555;"></div>
<div class="a" style="left:71.5px;top:836.5px;width:1.6px;height:1.6px;background:#555;"></div>
<div class="a" style="left:82.5px;top:825.5px;width:63.0px;height:17px;background:#3a9b3a;"></div>
<div class="t" style="left:91.5px;top:828.63px;font-size:10.5px;color:#fff;letter-spacing:0.006px;">Begroting</div>
<div class="a" style="left:150.5px;top:825.5px;width:70.0px;height:17px;background:#3a9b3a;"></div>
<div class="t" style="left:159.5px;top:828.63px;font-size:10.5px;color:#fff;letter-spacing:-0.188px;">Transacties</div>
<div class="a" style="left:225px;top:825.5px;width:70px;height:17px;background:#3a9b3a;"></div>
<div class="t" style="left:233.5px;top:828.63px;font-size:10.5px;color:#fff;letter-spacing:0.070px;">Debiteuren</div>
<div class="a" style="left:299.5px;top:825.5px;width:71.5px;height:17px;background:#0070c0;"></div>
<div class="t" style="left:308px;top:828.63px;font-size:10.5px;color:#fff;letter-spacing:-0.283px;">Rekeningen</div>
<div class="a" style="left:375.5px;top:825.5px;width:74.5px;height:17px;background:#0070c0;"></div>
<div class="t" style="left:384.5px;top:828.63px;font-size:10.5px;color:#fff;letter-spacing:-0.121px;">Categorieen</div>
<div class="a" style="left:455px;top:825.5px;width:91.20000000000005px;height:17px;background:#0070c0;"></div>
<div class="t" style="left:464.5px;top:828.63px;font-size:10.5px;color:#fff;letter-spacing:-0.008px;">Appartementen</div>
<div class="a" style="left:550.7px;top:825.5px;width:63.0px;height:17px;background:#0070c0;"></div>
<div class="t" style="left:558.7px;top:828.63px;font-size:10.5px;color:#fff;letter-spacing:-0.197px;">Eigenaren</div>
<div class="a" style="left:618.7px;top:825.5px;width:53.299999999999955px;height:17px;background:#0070c0;"></div>
<div class="t" style="left:626.7px;top:828.63px;font-size:10.5px;color:#fff;letter-spacing:-0.305px;">Relaties</div>
<div class="a" style="left:676.2px;top:825.5px;width:68.79999999999995px;height:17px;background:#0070c0;"></div>
<div class="t" style="left:685px;top:828.63px;font-size:10.5px;color:#fff;letter-spacing:-0.096px;">Contracten</div>
<div class="a" style="left:747px;top:824px;width:96px;height:19px;background:linear-gradient(#ffffff 0%,#fdf3ea 35%,#f6cfae 100%)"></div>
<div class="a" style="left:747px;top:841px;width:96px;height:2px;background:#2b7a3e;"></div>
<div class="t" style="left:756.2px;top:828.63px;font-size:10.5px;color:#2e7d4a;letter-spacing:-0.060px;font-weight:bold;">W&amp;V en Balans</div>
<div class="a" style="left:845px;top:825.5px;width:21.3px;height:17px;background:#c55a11;"></div>
<div class="a" style="left:852.5px;top:825.5px;width:13.8px;height:17px;overflow:hidden"><div class="t" style="left:0.5px;top:3.1px;font-size:10.5px;color:#fff">Da</div></div>
<div class="a" style="left:873.0px;top:836.5px;width:1.6px;height:1.6px;background:#555;"></div>
<div class="a" style="left:876.5px;top:836.5px;width:1.6px;height:1.6px;background:#555;"></div>
<div class="a" style="left:880.0px;top:836.5px;width:1.6px;height:1.6px;background:#555;"></div>
<svg style="left:893px;top:828px;" width="13" height="13" viewBox="0 0 13 13"><circle cx="6.5" cy="6.5" r="5.6" fill="none" stroke="#666" stroke-width="1"/><path d="M3.8 6.5 h5.4 M6.5 3.8 v5.4" stroke="#555" stroke-width="1"/></svg>
<div class="a" style="left:921.5px;top:829.5px;width:1.2px;height:1.6px;background:#bdbdbd;"></div>
<div class="a" style="left:921.5px;top:833.1px;width:1.2px;height:1.6px;background:#bdbdbd;"></div>
<div class="a" style="left:921.5px;top:836.7px;width:1.2px;height:1.6px;background:#bdbdbd;"></div>
<svg style="left:937.5px;top:830px;" width="6" height="8" viewBox="0 0 6 8"><path d="M5.5 0.5 v7 L0.8 4z" fill="#555"/></svg>
<div class="a" style="left:947.5px;top:830.5px;width:526.5px;height:7.5px;background:#767676;border-radius:3.8px"></div>
<svg style="left:1509px;top:830px;" width="6" height="8" viewBox="0 0 6 8"><path d="M0.5 0.5 v7 L5.2 4z" fill="#555"/></svg>
<div class="a" style="left:0px;top:845.5px;width:1536px;height:16px;background:#f3f3f3;"></div>
<div class="t" style="left:7px;top:849.27px;font-size:9.5px;color:#333;letter-spacing:-0.597px;">Gereed</div>
<div class="t" style="left:54.5px;top:849.27px;font-size:9.5px;color:#333;letter-spacing:-0.369px;">Berekenen</div>
<svg style="left:113px;top:848.5px;" width="12" height="11" viewBox="0 0 12 11"><rect x=".5" y=".5" width="11" height="10" fill="#e8e8e8" stroke="#666" stroke-width="1"/><path d="M.5 3.5 h11 M3.5 3.5 v7" stroke="#666" stroke-width="1"/><rect x="5.5" y="5.5" width="5" height="4" fill="#777"/></svg>
<svg style="left:138.5px;top:848px;" width="12" height="12" viewBox="0 0 12 12"><circle cx="5.5" cy="2.2" r="1.6" fill="none" stroke="#555" stroke-width="1"/><path d="M1 4.8 h9 M5.5 4.8 v3 M5.5 7.8 l-2.6 3.6 M5.5 7.8 l2.6 3.6" fill="none" stroke="#555" stroke-width="1"/></svg>
<div class="t" style="left:153.7px;top:849.27px;font-size:9.5px;color:#333;letter-spacing:-0.016px;">Toegankelijkheid: onderzoeken</div>
<div class="a" style="left:1296.5px;top:846px;width:31.3px;height:16px;background:#dcdcdc;"></div>
<svg style="left:1305.5px;top:848.5px;" width="12" height="12" viewBox="0 0 12 12"><rect x=".5" y=".5" width="11" height="11" fill="none" stroke="#444" stroke-width="1"/><path d="M.5 4 h11 M.5 8 h11 M4 .5 v11 M8 .5 v11" stroke="#444" stroke-width="1"/></svg>
<svg style="left:1338px;top:848.5px;" width="12" height="12" viewBox="0 0 12 12"><rect x=".5" y=".5" width="11" height="9" fill="none" stroke="#555" stroke-width="1"/><path d="M3 .5 v9 M6 .5 v9 M9 .5 v9 M.5 3 h11" stroke="#666" stroke-width=".8"/><path d="M0 11.5 h12" stroke="#555" stroke-width="1"/></svg>
<svg style="left:1370px;top:848.5px;" width="12" height="12" viewBox="0 0 12 12"><rect x=".5" y=".5" width="11" height="11" fill="none" stroke="#555" stroke-width="1"/><path d="M4 .5 v5 h4 v-5" fill="none" stroke="#555" stroke-width="1"/></svg>
<div class="a" style="left:1397.5px;top:854px;width:4px;height:1px;background:#555;"></div>
<div class="a" style="left:1407px;top:854px;width:81px;height:1px;background:#8a8a8a;"></div>
<div class="a" style="left:1446.3px;top:849.5px;width:3px;height:10px;background:#555;"></div>
<div class="a" style="left:1492.5px;top:854px;width:5px;height:1px;background:#555;"></div>
<div class="a" style="left:1494.5px;top:852px;width:1px;height:5px;background:#555;"></div>
<div class="t" style="left:1509px;top:849.27px;font-size:9.5px;color:#444;letter-spacing:-1.766px;">100%</div>
<div class="a" style="left:0px;top:861.3px;width:1536px;height:2.7px;background:#1c1c1c;"></div>
</body></html>
